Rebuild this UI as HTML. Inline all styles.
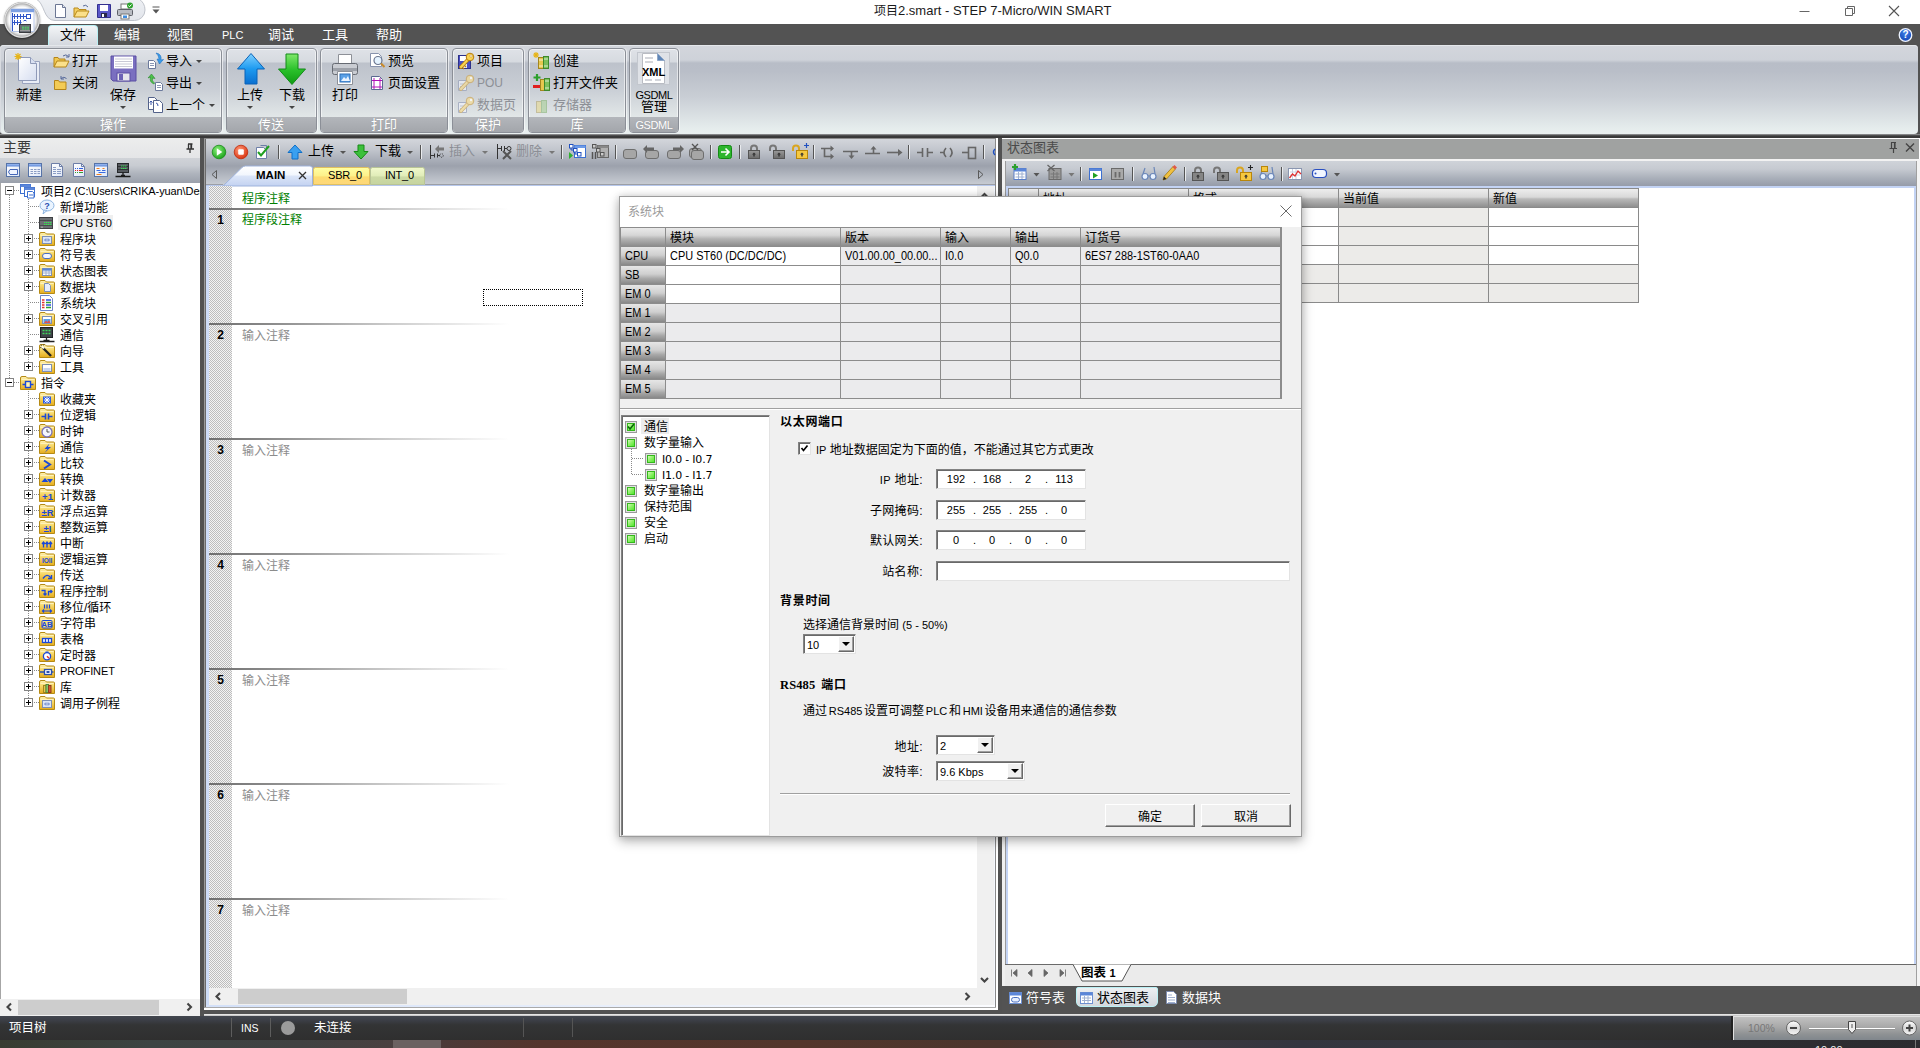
<!DOCTYPE html>
<html lang="zh-CN">
<head>
<meta charset="utf-8">
<title>项目2.smart - STEP 7-Micro/WIN SMART</title>
<style>
*{box-sizing:border-box;margin:0;padding:0}
html,body{width:1920px;height:1048px;overflow:hidden}
body{position:relative;background:#525252;font-family:"Liberation Sans","Noto Sans CJK SC",sans-serif;font-size:12px;color:#000}
.a{position:absolute}
.t{position:absolute;white-space:nowrap;line-height:1}
svg{position:absolute;overflow:visible}
.yh{font-family:"Liberation Sans","Noto Sans CJK SC",sans-serif}
</style>
</head>
<body>
<!-- ===== title bar ===== -->
<div class="a" id="titlebar" style="left:0;top:0;width:1920px;height:24px;background:#fff"></div>
<div class="t" style="left:874px;top:4px;font-size:13px;color:#1a1a1a"><span style="font-size:12px">项目</span>2.smart - STEP 7-Micro/WIN SMART</div>
<svg style="left:1790px;top:0" width="130" height="24" viewBox="0 0 130 24">
 <path d="M9.5 11.5h10" stroke="#666" stroke-width="1" fill="none"/>
 <path d="M55.5 8.5h7v7h-7zM57.5 8.5v-2h7v7h-2" stroke="#666" stroke-width="1" fill="none"/>
 <path d="M99 6l10 10M109 6l-10 10" stroke="#555" stroke-width="1.1" fill="none"/>
</svg>
<!-- ===== menu bar ===== -->
<div class="a" id="menubar" style="left:0;top:24px;width:1920px;height:21px;background:#535353"></div>
<!-- quick access -->
<svg style="left:0;top:0" width="150" height="24" viewBox="0 0 150 24"><defs><linearGradient id="qa" x1="0" y1="0" x2="0" y2="1"><stop offset="0" stop-color="#eef0f4"/><stop offset="1" stop-color="#e2e5eb"/></linearGradient></defs><path d="M36 -1C45 3 43 20.500 55 20.500H134.500A10.500 10.500 0 0 0 145 10Q145 3 139 -1z" fill="url(#qa)" stroke="#bfc3cb"/></svg>
<svg style="left:52px;top:2px" width="100" height="20" viewBox="0 0 100 20">
 <!-- new doc -->
 <path d="M3.5 2.5h7l3 3v10h-10z" fill="#fdfdff" stroke="#6b7693"/><path d="M10.500 2.500v3h3" fill="#dfe4f2" stroke="#6b7693"/>
 <!-- open folder -->
 <path d="M22 15V6h4l1 1.500h7V9" fill="#f3cf62" stroke="#b98a1b"/><path d="M22 15l3-6h12l-3 6z" fill="#fbe08a" stroke="#b98a1b"/><path d="M31 4q3-2 5 1" fill="none" stroke="#5a6d9a"/>
 <!-- save -->
 <path d="M45.500 2.500h13v13h-13z" fill="#5b58c9" stroke="#33308f"/><rect x="48" y="3" width="8" height="6" fill="#fff"/><rect x="49" y="11" width="6" height="4" fill="#2a2a4a"/><rect x="50" y="12" width="2" height="3" fill="#fff"/>
 <!-- print -->
 <rect x="69" y="2" width="8" height="5" fill="#fff" stroke="#777"/><rect x="65.500" y="7.500" width="15" height="6" rx="1" fill="#b9bcc3" stroke="#5d6068"/><rect x="69" y="12" width="8" height="5" fill="#fff" stroke="#777"/><rect x="71" y="13.500" width="4" height="2.500" fill="#3f8de0"/><circle cx="78" cy="3.500" r="3" fill="#2da32d"/><path d="M76.500 3.500l1 1.200 2-2.200" stroke="#fff" fill="none"/>
</svg>
<svg style="left:151px;top:6px" width="12" height="10" viewBox="0 0 12 10"><path d="M1.500 1h7" stroke="#555"/><path d="M1.500 3.500h7l-3.500 4z" fill="#555"/></svg>
<!-- app button -->
<div class="a" style="left:4px;top:2px;width:36px;height:36px;border-radius:50%;background:radial-gradient(circle closest-side at 50% 50%,#ffffff 0%,#fbfbfb 72%,#dadada 82%,#b2b2b2 90%,#e6e6e6 96%,#a6a6a6 100%);box-shadow:0 1px 2px rgba(0,0,0,.5)"></div>
<svg style="left:10px;top:8px" width="25" height="26" viewBox="0 0 25 26">
 <rect x="1" y="1" width="23" height="22.500" fill="#fdfdff" stroke="#b7c6e6" stroke-width="1"/><rect x="1" y="1" width="23" height="3.200" fill="#7c9fe2"/>
 <path d="M2.500 5v18M2.500 8.500h14M4.500 6v5M7.500 6v5M10.500 6v5M13.500 6v5M2.500 14.500h9M4.500 12v5M7.500 12v5M10.500 12v5M13.500 13q1.500-1.500 3 0" stroke="#2f55c8" fill="none" stroke-width="1"/><rect x="16.500" y="6.500" width="4" height="4" fill="none" stroke="#2f55c8"/>
 <rect x="9.500" y="16.500" width="11" height="8" fill="#6a6e74" stroke="#3a3c40"/><rect x="10" y="22" width="10" height="1" fill="#999"/><path d="M12 19.200h7M12 21h7" stroke="#4fe068" stroke-width="1" stroke-dasharray="2 .6"/>
</svg>
<!-- tabs -->
<div class="a" style="left:48px;top:25px;width:50px;height:20px;border:1px solid #b9f0f4;border-bottom:none;border-radius:4px 4px 0 0;background:linear-gradient(#f3f5f7,#d4d8de)"></div>
<div class="t" style="left:60px;top:28px;font-size:13px;color:#000">文件</div>
<div class="t" style="left:114px;top:28px;font-size:13px;color:#fff">编辑</div>
<div class="t" style="left:167px;top:28px;font-size:13px;color:#fff">视图</div>
<div class="t" style="left:222px;top:30px;font-size:11px;color:#fff">PLC</div>
<div class="t" style="left:268px;top:28px;font-size:13px;color:#fff">调试</div>
<div class="t" style="left:322px;top:28px;font-size:13px;color:#fff">工具</div>
<div class="t" style="left:376px;top:28px;font-size:13px;color:#fff">帮助</div>
<svg style="left:1898px;top:27px" width="15" height="15" viewBox="0 0 15 15"><defs><radialGradient id="hb" cx=".5" cy=".3" r=".8"><stop offset="0" stop-color="#3f7fe8"/><stop offset="1" stop-color="#0e3fb0"/></radialGradient></defs><circle cx="7.500" cy="8" r="6.300" fill="url(#hb)" stroke="#eef3fd" stroke-width="1.300"/><text x="7.500" y="11.200" font-size="10" font-weight="bold" text-anchor="middle" fill="#fff" font-family="Liberation Sans,sans-serif">?</text></svg>
<!-- ===== ribbon ===== -->
<div class="a" id="ribbon" style="left:0;top:45px;width:1918px;height:89px;border-radius:4px 4px 4px 4px;background:linear-gradient(#d3d6dc 0,#ced2d9 15px,#b8bdc7 18px,#b9bec8 26px,#c9ced5 52px,#e6eded 84px,#e9efef 100%);box-shadow:inset 0 1px 0 #e4e7eb, inset 1px 0 0 #d9dce1"></div>
<style>
.grp{position:absolute;top:48px;height:85px;border:1px solid #8b8f97;border-radius:4px;background:linear-gradient(#dfe2e7 0,#d6dae0 13px,#bdc2cb 14px,#c9ced5 40px,#e1e6e7 67px,#e3e8e8 100%);box-shadow:inset 0 0 0 1px rgba(255,255,255,.55),1px 0 0 rgba(255,255,255,.6)}
.grp i{position:absolute;left:0;right:0;bottom:0;height:15px;background:linear-gradient(#b3b6bb,#a3a6ab);border-radius:0 0 3px 3px}
.gl{position:absolute;top:118px;font-size:13px;color:#fff;text-align:center;white-space:nowrap;line-height:1;text-shadow:0 0 1px rgba(120,120,120,.5)}
.rt{position:absolute;white-space:nowrap;line-height:1;font-size:13px;color:#000}
.rt.dis{color:#8d9096}
.dd{position:absolute;width:0;height:0;border-left:3px solid transparent;border-right:3px solid transparent;border-top:3px solid #444}
</style>
<div class="grp" style="left:4px;width:218px"><i></i></div>
<div class="grp" style="left:226px;width:91px"><i></i></div>
<div class="grp" style="left:320px;width:128px"><i></i></div>
<div class="grp" style="left:452px;width:72px"><i></i></div>
<div class="grp" style="left:528px;width:98px"><i></i></div>
<div class="grp" style="left:629px;width:50px"><i></i></div>
<div class="gl" style="left:4px;width:218px">操作</div>
<div class="gl" style="left:226px;width:90px">传送</div>
<div class="gl" style="left:320px;width:128px">打印</div>
<div class="gl" style="left:452px;width:72px">保护</div>
<div class="gl" style="left:528px;width:98px">库</div>
<div class="gl" style="left:629px;width:50px;font-size:11px;top:120px;letter-spacing:-.4px">GSDML</div>
<!-- group 1 -->
<svg style="left:15px;top:53px" width="28" height="32" viewBox="0 0 28 32">
 <defs><linearGradient id="nd" x1="0" y1="0" x2="1" y2="1"><stop offset="0" stop-color="#ffffff"/><stop offset="1" stop-color="#d5ddf0"/></linearGradient></defs><path d="M7.500 8.500h17v22h-17z" fill="#e8ecf6" stroke="#9aa4bf"/>
 <path d="M3.500 4.500h12l6 6v17h-18z" fill="url(#nd)" stroke="#8f9ab8"/><path d="M15.500 4.500v6h6" fill="#d9e0f1" stroke="#8f9ab8"/>
 <path d="M3 0v7M-.5 3.500h7M.5 1l5 5M5.500 1l-5 5" stroke="#e7b416" stroke-width="1.200"/>
</svg>
<div class="rt" style="left:16px;top:88px">新建</div>
<svg style="left:53px;top:53px" width="17" height="16" viewBox="0 0 17 16"><path d="M1 14V4.500h4l1 1.500h6V8" fill="#f0c850" stroke="#b58418"/><path d="M1 14l3-6h12l-3 6z" fill="#fbe08a" stroke="#b58418"/><path d="M10 3q3-2.500 5.500.5" fill="none" stroke="#56699a"/><path d="M16 1v3h-3" fill="none" stroke="#56699a"/></svg>
<div class="rt" style="left:72px;top:54px">打开</div>
<svg style="left:53px;top:75px" width="17" height="16" viewBox="0 0 17 16"><path d="M1.500 14.500v-9h4l1 1.500h6.500v7.500z" fill="#f3cb55" stroke="#b58418"/><path d="M8 3.500q3-2.500 5.500 0" fill="none" stroke="#56699a"/><path d="M8 1v3h3" fill="none" stroke="#56699a"/></svg>
<div class="rt" style="left:72px;top:76px">关闭</div>
<svg style="left:110px;top:55px" width="27" height="28" viewBox="0 0 27 28">
 <path d="M1 1h25v25H3l-2-2z" fill="#7a6fc0" stroke="#5b4fa3"/><rect x="4" y="1.500" width="19" height="12" fill="#fff"/><path d="M5 4h17M5 6.500h17M5 9h17M5 11.500h17" stroke="#c9c9d6" stroke-width="1"/><rect x="7" y="18" width="13" height="8" fill="#e6e6ec" stroke="#5b4fa3"/><rect x="9" y="19" width="4" height="6" fill="#6c62b5"/>
</svg>
<div class="rt" style="left:110px;top:88px">保存</div><div class="dd" style="left:120px;top:106px"></div>
<svg style="left:147px;top:52px" width="18" height="18" viewBox="0 0 18 18"><path d="M1.500 8.500h5l2 2v6h-7z" fill="#fff" stroke="#6c7a9c"/><path d="M3 11.500h4M3 13.500h4" stroke="#8b97b3"/><path d="M9 1q6 1 5 7l2.500-.5-4 4.500-2.500-5 2 .5q0-4-3-6.500z" fill="#3a9be8" stroke="#1e6fc0" stroke-width=".6"/></svg>
<div class="rt" style="left:166px;top:54px">导入</div><div class="dd" style="left:196px;top:60px"></div>
<svg style="left:147px;top:74px" width="18" height="18" viewBox="0 0 18 18"><path d="M8.500 8.500h5l2 2v6h-7z" fill="#fff" stroke="#6c7a9c"/><path d="M10 11.500h4M10 13.500h4" stroke="#8b97b3"/><path d="M7 10q-5-2-3.500-7L1 4l3.500-4L8 4.500 5.500 4q-1 3 2 5z" fill="#4cc24c" stroke="#2a8a2a" stroke-width=".6"/></svg>
<div class="rt" style="left:166px;top:76px">导出</div><div class="dd" style="left:196px;top:82px"></div>
<svg style="left:147px;top:96px" width="18" height="18" viewBox="0 0 18 18"><path d="M1.500 1.500h6l3 3v9h-9z" fill="#fff" stroke="#53628a"/><path d="M6.500 4.500h6l3 3v9h-9z" fill="#fff" stroke="#53628a"/><path d="M4 9V5M2.500 6.500L4 5l1.500 1.500M9 7q2 0 2 3" stroke="#3b57a8" fill="none"/></svg>
<div class="rt" style="left:166px;top:98px">上一个</div><div class="dd" style="left:209px;top:104px"></div>
<!-- group 2 -->
<svg style="left:236px;top:52px" width="30" height="34" viewBox="0 0 30 34"><defs><linearGradient id="gu" x1="0" y1="0" x2="0" y2="1"><stop offset="0" stop-color="#7fd0ff"/><stop offset=".5" stop-color="#1e9bf0"/><stop offset="1" stop-color="#0a6fd0"/></linearGradient><linearGradient id="gd" x1="0" y1="0" x2="0" y2="1"><stop offset="0" stop-color="#7fe86a"/><stop offset=".5" stop-color="#2cc22c"/><stop offset="1" stop-color="#0e9a12"/></linearGradient></defs>
 <path d="M15 1.500L28.500 17H21v15H9V17H1.500z" fill="url(#gu)" stroke="#0b63b8" stroke-width="1"/></svg>
<div class="rt" style="left:237px;top:88px">上传</div><div class="dd" style="left:247px;top:106px"></div>
<svg style="left:277px;top:52px" width="30" height="34" viewBox="0 0 30 34"><path d="M15 32.500L28.500 17H21V2H9v15H1.500z" fill="url(#gd)" stroke="#128a18" stroke-width="1"/></svg>
<div class="rt" style="left:279px;top:88px">下载</div><div class="dd" style="left:289px;top:106px"></div>
<!-- group 3 -->
<svg style="left:331px;top:53px" width="28" height="33" viewBox="0 0 28 33">
 <path d="M7.500 1.500h13v10h-13z" fill="#fff" stroke="#8d9097"/><rect x="1.500" y="10.500" width="25" height="11" rx="2" fill="#c9ccd2" stroke="#666a72"/><rect x="2" y="15" width="24" height="3" fill="#9da1a9"/><path d="M6.500 18.500h15v13h-15z" fill="#fff" stroke="#8d9097"/><rect x="9" y="21" width="10" height="8" fill="#5aa0e6" stroke="#2f6fb8"/><path d="M10 28l3-4 2 2 2-3 2 5z" fill="#eaf3ff"/>
</svg>
<div class="rt" style="left:332px;top:88px">打印</div>
<svg style="left:369px;top:52px" width="17" height="17" viewBox="0 0 17 17"><path d="M1.500 1.500h8l3 3v10h-11z" fill="#fff" stroke="#8893ad"/><circle cx="9" cy="8.500" r="4" fill="#dff0ff" fill-opacity=".8" stroke="#6b7690" stroke-width="1.200"/><path d="M12 11.500l3.500 3.500" stroke="#c98a2a" stroke-width="2"/></svg>
<div class="rt" style="left:388px;top:54px">预览</div>
<svg style="left:369px;top:74px" width="17" height="17" viewBox="0 0 17 17"><path d="M2.500 2.500h8l3 3v10h-11z" fill="#fff" stroke="#5a6890"/><path d="M5 4v11M11 4v11M3 6.500h10M3 13h10" stroke="#b010b8" stroke-width="1"/></svg>
<div class="rt" style="left:388px;top:76px">页面设置</div>
<!-- group 4 keys -->
<svg style="left:457px;top:52px" width="18" height="18" viewBox="0 0 18 18"><rect x="1.500" y="3.500" width="12" height="13" fill="#4a4fc0" stroke="#2d318a"/><rect x="3" y="4" width="6" height="5" fill="#fff"/><rect x="4" y="12" width="6" height="4" fill="#e8e8f0"/><path d="M4 15l7.500-8" stroke="#b97f10" stroke-width="3.800" stroke-linecap="round"/><path d="M4 15l7.500-8" stroke="#f8d352" stroke-width="2.200" stroke-linecap="round"/><path d="M5.500 15.500l1.500 1.500M7.500 13.500l1.500 1.500" stroke="#b97f10" stroke-width="1.300"/><circle cx="13" cy="5" r="3.800" fill="#f8d352" stroke="#b97f10"/><circle cx="14" cy="4" r="1.200" fill="#fff" stroke="#b97f10" stroke-width=".5"/></svg>
<div class="rt" style="left:477px;top:54px">项目</div>
<svg style="left:457px;top:74px" width="18" height="18" viewBox="0 0 18 18" opacity=".75"><path d="M1.500 6.500h8v10h-8z" fill="#eef1f7" stroke="#9aa3bb"/><path d="M3 10h5M3 12.500h5" stroke="#b5bccd"/><path d="M4 15l7.500-8" stroke="#c9a45a" stroke-width="3.800" stroke-linecap="round"/><path d="M4 15l7.500-8" stroke="#f3dc98" stroke-width="2.200" stroke-linecap="round"/><circle cx="13" cy="5" r="3.800" fill="#f3dc98" stroke="#c9a45a"/><circle cx="14" cy="4" r="1.200" fill="#fff"/></svg>
<div class="rt dis" style="left:477px;top:77px;font-size:12px">POU</div>
<svg style="left:457px;top:96px" width="18" height="18" viewBox="0 0 18 18" opacity=".75"><path d="M1.500 6.500h8v10h-8z" fill="#eef1f7" stroke="#9aa3bb"/><path d="M3 10h5M3 12.500h5" stroke="#b5bccd"/><path d="M4 15l7.500-8" stroke="#c9a45a" stroke-width="3.800" stroke-linecap="round"/><path d="M4 15l7.500-8" stroke="#f3dc98" stroke-width="2.200" stroke-linecap="round"/><circle cx="13" cy="5" r="3.800" fill="#f3dc98" stroke="#c9a45a"/><circle cx="14" cy="4" r="1.200" fill="#fff"/></svg>
<div class="rt dis" style="left:477px;top:98px">数据页</div>
<!-- group 5 library -->
<svg style="left:533px;top:52px" width="18" height="18" viewBox="0 0 18 18"><path d="M3 0v6M0 3h6M1 1l4 4M5 1L1 5" stroke="#e7b416" stroke-width="1.100"/><rect x="5.500" y="5.500" width="5" height="11" fill="#e6c84e" stroke="#a3861e"/><rect x="10.500" y="4.500" width="5" height="12" fill="#7cc05c" stroke="#3f8a2c"/><path d="M6 8h4M6 14h4M11 7h4M11 14h4" stroke="#fff" stroke-opacity=".7"/></svg>
<div class="rt" style="left:553px;top:54px">创建</div>
<svg style="left:533px;top:74px" width="18" height="18" viewBox="0 0 18 18"><path d="M4 0v7M.5 3.500h7" stroke="#2ca02c" stroke-width="2.200"/><rect x="0" y="11" width="8" height="3" fill="#e02020"/><rect x="7.500" y="5.500" width="4" height="11" fill="#e6c84e" stroke="#a3861e"/><rect x="11.500" y="4.500" width="5" height="12" fill="#7cc05c" stroke="#3f8a2c"/><path d="M12 7h4M12 14h4" stroke="#fff" stroke-opacity=".7"/></svg>
<div class="rt" style="left:553px;top:76px">打开文件夹</div>
<svg style="left:533px;top:96px" width="18" height="18" viewBox="0 0 18 18" opacity=".6"><rect x="3.500" y="5.500" width="5" height="11" fill="#e6d88e" stroke="#b3a66e"/><rect x="8.500" y="4.500" width="5" height="12" fill="#a9cf97" stroke="#86b374"/></svg>
<div class="rt dis" style="left:553px;top:98px">存储器</div>
<!-- group 6 -->
<svg style="left:637px;top:52px" width="34" height="34" viewBox="0 0 34 34"><rect x=".5" y=".5" width="32" height="32" fill="#dfe2e7" stroke="#c3c7ce"/><path d="M5.500 1.500h15l7 7v23h-22z" fill="#fff" stroke="#b9bcc3"/><path d="M20.500 1.500v7h7z" fill="#5f86b8" stroke="#8ea7c8"/><path d="M8 6h8M8 10h8M8 28h7M18 28h6" stroke="#c6c9cf" stroke-width="1.300"/><text x="16.500" y="24" font-size="11" font-weight="bold" text-anchor="middle" font-family="Liberation Sans,sans-serif" fill="#000">XML</text></svg>
<div class="rt" style="left:629px;width:50px;text-align:center;top:90px;font-size:11px;letter-spacing:-.4px">GSDML</div>
<div class="rt" style="left:629px;width:50px;text-align:center;top:100px">管理</div>
<!-- below ribbon dark band -->
<div class="a" style="left:0;top:134px;width:1920px;height:4px;background:linear-gradient(#9a9c9f 0,#6a6a6a 28%,#3a3a3a 45%,#383838 100%)"></div>
<!-- ===== left panel ===== -->
<svg width="0" height="0" style="left:0;top:0"><defs><linearGradient id="fgr" x1="0" y1="0" x2="0" y2="1"><stop offset="0" stop-color="#fdf0b4"/><stop offset=".35" stop-color="#f8dc72"/><stop offset="1" stop-color="#e6ac1c"/></linearGradient></defs></svg>
<div class="a" style="left:0;top:138px;width:200px;height:878px;background:#fff"></div>
<div class="a" style="left:0;top:138px;width:200px;height:20px;background:linear-gradient(#eceded,#e4e5e7)"></div>
<div class="t" style="left:3px;top:140px;font-size:14px;color:#3a3a3a">主要</div>
<svg style="left:186px;top:143px" width="8" height="10" viewBox="0 0 8 10"><path d="M2 1h4.500M2.500 1v5M5.500 1v5M5 1v5M.5 6h7.500M4 6v4" stroke="#333" stroke-width="1.300" fill="none"/></svg>
<div class="a" style="left:0;top:158px;width:200px;height:25px;background:linear-gradient(#d0d3d8 0,#c8ccd2 30%,#afb4bd 62%,#9aa0ab 100%)"></div>
<svg style="left:5px;top:162px" width="130" height="17" viewBox="0 0 130 17">
<defs><linearGradient id="tb" x1="0" y1="0" x2="0" y2="1"><stop offset="0" stop-color="#9dbcf2"/><stop offset="1" stop-color="#5b86d8"/></linearGradient><linearGradient id="wb" x1="0" y1="0" x2="1" y2="1"><stop offset="0" stop-color="#ffffff"/><stop offset="1" stop-color="#dfe7f6"/></linearGradient></defs>
<g><rect x="1.500" y="1.500" width="13" height="13" fill="url(#wb)" stroke="#5673a8"/><rect x="2" y="2" width="12" height="2.500" fill="url(#tb)"/><path d="M5 7.500h7.500v5H5L3.500 10z" fill="#eef3ff" stroke="#4466b8"/></g>
<g transform="translate(22,0)"><rect x="1.500" y="1.500" width="13" height="13" fill="url(#wb)" stroke="#5673a8"/><rect x="2" y="2" width="12" height="2.500" fill="url(#tb)"/><path d="M3.500 7.500h2.500M7 7.500h2.500M10.500 7.500H13M3.500 9.500h2.500M7 9.500h2.500M10.500 9.500H13M3.500 11.500h2.500M7 11.500h2.500M10.500 11.500H13" stroke="#8a9cc4"/></g>
<g transform="translate(44,0)"><path d="M2.500 1.500h8l3 3v10h-11z" fill="url(#wb)" stroke="#6d7ea8"/><path d="M10.500 1.500v3h3" fill="none" stroke="#6d7ea8"/><path d="M4 5.500h3M4 7.500h3M8 7.500h4M4 9.500h3M8 9.500h4M4 11.500h3M8 11.500h4" stroke="#8a9cc4"/></g>
<g transform="translate(66,0)"><path d="M2.500 1.500h8l3 3v10h-11z" fill="url(#wb)" stroke="#6d7ea8"/><path d="M10.500 1.500v3h3" fill="none" stroke="#6d7ea8"/><path d="M4 6.500h1M6 6.500h1" stroke="#3060e0"/><path d="M8 6.500h4" stroke="#3060e0"/><path d="M4 8.500h1M6 8.500h1M8 8.500h4" stroke="#e02020"/><path d="M4 10.500h1M6 10.500h1M8 10.500h4" stroke="#30a030"/></g>
<g transform="translate(88,0)"><rect x="1.500" y="1.500" width="13" height="13" fill="url(#wb)" stroke="#5673a8"/><rect x="2" y="2" width="12" height="2.500" fill="url(#tb)"/><path d="M3.500 6.500h3M9.500 6.500h2M3.500 12.500h5" stroke="#f08020"/><path d="M3.500 8.500h4M9 8.500h3.500M5.500 10.500h7" stroke="#3c6ce0"/></g>
<g transform="translate(110,0)"><rect x="2.500" y="1.500" width="11" height="9" fill="#55595e" stroke="#26282b"/><path d="M3 4.500h10M3 7.500h10" stroke="#2e3033"/><path d="M6 4h6M6 6.500h6" stroke="#3fd85a" stroke-width="1" stroke-dasharray="1.500 .5"/><path d="M8 10.500v3M.5 14.500h15M6 13.500h4" stroke="#1a1a1a" stroke-width="1.300"/></g>
</svg>
<style>.nl{font-size:11px;letter-spacing:-.1px;position:relative;top:-1px}</style>
<div class="a" style="left:0;top:183px;width:1px;height:816px;background:#a6a6a6"></div>
<div class="a" id="tree" style="left:0;top:183px;width:200px;height:814px;overflow:hidden;font-size:12px">
<div class="a" style="left:9px;top:12px;width:1px;height:188px;background-image:linear-gradient(#8a8a8a 50%,transparent 50%);background-size:1px 2px"></div>
<div class="a" style="left:28px;top:14px;width:1px;height:170px;background-image:linear-gradient(#8a8a8a 50%,transparent 50%);background-size:1px 2px"></div>
<div class="a" style="left:28px;top:206px;width:1px;height:314px;background-image:linear-gradient(#8a8a8a 50%,transparent 50%);background-size:1px 2px"></div>
<div class="a" style="left:14px;top:7px;width:6px;height:1px;background-image:linear-gradient(90deg,#8a8a8a 50%,transparent 50%);background-size:2px 1px"></div>
<svg style="left:5px;top:3px" width="9" height="9" viewBox="0 0 9 9"><rect x=".5" y=".5" width="8" height="8" fill="#fff" stroke="#848484"/><path d="M2 4h5" stroke="#000" transform="translate(0,.5)"/></svg>
<svg style="left:20px;top:0px" width="16" height="16" viewBox="0 0 16 16"><rect x=".5" y="1.500" width="10" height="9" fill="#fff" stroke="#3c6fd0"/><rect x=".5" y="1.500" width="10" height="2.500" fill="#5b86d8"/><rect x="4.500" y="4.500" width="10" height="9" fill="#fff" stroke="#3c6fd0"/><rect x="4.500" y="4.500" width="10" height="2.500" fill="#5b86d8"/><path d="M7.500 8.500h5l1.500 1.500v5h-6.500z" fill="#fff" stroke="#3c6fd0"/><path d="M9 12h4" stroke="#3c6fd0"/></svg>
<div class="t" style="left:41px;top:3px;font-size:12px">项目<span class="nl">2 (C:\Users\CRIKA-yuan\Des</span></div>
<div class="a" style="left:30px;top:23px;width:9px;height:1px;background-image:linear-gradient(90deg,#8a8a8a 50%,transparent 50%);background-size:2px 1px"></div>
<svg style="left:39px;top:16px" width="16" height="16" viewBox="0 0 16 16"><ellipse cx="8" cy="6.500" rx="7" ry="5.500" fill="#eaf4ff" stroke="#8fb5e0"/><path d="M5 11l-1 4 4-3.500z" fill="#eaf4ff" stroke="#8fb5e0"/><text x="8" y="10" font-size="9" font-weight="bold" text-anchor="middle" fill="#2a4fb0" font-family="Liberation Sans,sans-serif">?</text></svg>
<div class="t" style="left:60px;top:19px;font-size:12px">新增功能</div>
<div class="a" style="left:30px;top:39px;width:9px;height:1px;background-image:linear-gradient(90deg,#8a8a8a 50%,transparent 50%);background-size:2px 1px"></div>
<svg style="left:39px;top:32px" width="16" height="16" viewBox="0 0 16 16"><rect x=".5" y="2.500" width="13" height="11" fill="#6b6e72" stroke="#3e4043"/><path d="M1 5.500h12M1 10.500h12" stroke="#4a4c4f"/><rect x="2" y="11.500" width="2" height="1.500" fill="#999"/><path d="M5 7.500h8" stroke="#35e850" stroke-width="1" stroke-dasharray="1.400 .6"/><path d="M5 9.500h8" stroke="#35e850" stroke-width="1" stroke-dasharray="1.400 .6"/></svg>
<div class="a" style="left:58px;top:32px;width:55px;height:15px;background:#efefef"></div>
<div class="t" style="left:60px;top:35px;font-size:12px"><span class="nl">CPU ST60</span></div>
<div class="a" style="left:34px;top:55px;width:5px;height:1px;background-image:linear-gradient(90deg,#8a8a8a 50%,transparent 50%);background-size:2px 1px"></div>
<svg style="left:24px;top:51px" width="9" height="9" viewBox="0 0 9 9"><rect x=".5" y=".5" width="8" height="8" fill="#fff" stroke="#848484"/><path d="M2 4h5M4.500 1.500v5" stroke="#000" transform="translate(0,.5)"/></svg>
<svg style="left:39px;top:48px" width="16" height="16" viewBox="0 0 16 16"><path d="M.5 14.500V3q0-1.500 1.500-1.500h4l1.500 1.500h7q1 0 1 1v10.500z" fill="url(#fgr)" stroke="#b58a14"/><path d="M1.500 4.500h13" stroke="#fff3c0" stroke-opacity=".9"/><rect x="3.500" y="5.500" width="9" height="7" fill="#dbe5f7" stroke="#7d8fb5"/><path d="M5 9h2M9 9h2M7 7.500v3M9 7.500v3" stroke="#6d86c8"/></svg>
<div class="t" style="left:60px;top:51px;font-size:12px">程序块</div>
<div class="a" style="left:34px;top:71px;width:5px;height:1px;background-image:linear-gradient(90deg,#8a8a8a 50%,transparent 50%);background-size:2px 1px"></div>
<svg style="left:24px;top:67px" width="9" height="9" viewBox="0 0 9 9"><rect x=".5" y=".5" width="8" height="8" fill="#fff" stroke="#848484"/><path d="M2 4h5M4.500 1.500v5" stroke="#000" transform="translate(0,.5)"/></svg>
<svg style="left:39px;top:64px" width="16" height="16" viewBox="0 0 16 16"><path d="M.5 14.500V3q0-1.500 1.500-1.500h4l1.500 1.500h7q1 0 1 1v10.500z" fill="url(#fgr)" stroke="#b58a14"/><path d="M1.500 4.500h13" stroke="#fff3c0" stroke-opacity=".9"/><rect x="3.500" y="6.500" width="9" height="5" rx="2.500" fill="#f2f6ff" stroke="#4a6fc0"/></svg>
<div class="t" style="left:60px;top:67px;font-size:12px">符号表</div>
<div class="a" style="left:34px;top:87px;width:5px;height:1px;background-image:linear-gradient(90deg,#8a8a8a 50%,transparent 50%);background-size:2px 1px"></div>
<svg style="left:24px;top:83px" width="9" height="9" viewBox="0 0 9 9"><rect x=".5" y=".5" width="8" height="8" fill="#fff" stroke="#848484"/><path d="M2 4h5M4.500 1.500v5" stroke="#000" transform="translate(0,.5)"/></svg>
<svg style="left:39px;top:80px" width="16" height="16" viewBox="0 0 16 16"><path d="M.5 14.500V3q0-1.500 1.500-1.500h4l1.500 1.500h7q1 0 1 1v10.500z" fill="url(#fgr)" stroke="#b58a14"/><path d="M1.500 4.500h13" stroke="#fff3c0" stroke-opacity=".9"/><rect x="3.500" y="5.500" width="9" height="7" fill="#fff" stroke="#7d8fb5"/><path d="M4 8h8M4 10h8M7 7v5M10 7v5" stroke="#9fb0d0"/><rect x="3.500" y="5.500" width="9" height="2" fill="#5b86d8"/></svg>
<div class="t" style="left:60px;top:83px;font-size:12px">状态图表</div>
<div class="a" style="left:34px;top:103px;width:5px;height:1px;background-image:linear-gradient(90deg,#8a8a8a 50%,transparent 50%);background-size:2px 1px"></div>
<svg style="left:24px;top:99px" width="9" height="9" viewBox="0 0 9 9"><rect x=".5" y=".5" width="8" height="8" fill="#fff" stroke="#848484"/><path d="M2 4h5M4.500 1.500v5" stroke="#000" transform="translate(0,.5)"/></svg>
<svg style="left:39px;top:96px" width="16" height="16" viewBox="0 0 16 16"><path d="M.5 14.500V3q0-1.500 1.500-1.500h4l1.500 1.500h7q1 0 1 1v10.500z" fill="url(#fgr)" stroke="#b58a14"/><path d="M1.500 4.500h13" stroke="#fff3c0" stroke-opacity=".9"/><path d="M5.500 4.500h4l2 2v6h-6z" fill="#e8eefc" stroke="#7d8fb5"/></svg>
<div class="t" style="left:60px;top:99px;font-size:12px">数据块</div>
<div class="a" style="left:30px;top:119px;width:9px;height:1px;background-image:linear-gradient(90deg,#8a8a8a 50%,transparent 50%);background-size:2px 1px"></div>
<svg style="left:39px;top:112px" width="16" height="16" viewBox="0 0 16 16"><path d="M1.500 .5h9l3 3v12h-12z" fill="#fff" stroke="#6d86c8"/><path d="M3 5h2.500M3 7.500h2.500M3 10h2.500M3 12.500h2.500" stroke="#e03030" stroke-width="1.400"/><path d="M7 5h5M7 10h5" stroke="#3050e0" stroke-width="1.400"/><path d="M7 7.500h5M7 12.500h5" stroke="#30a030" stroke-width="1.400"/></svg>
<div class="t" style="left:60px;top:115px;font-size:12px">系统块</div>
<div class="a" style="left:34px;top:135px;width:5px;height:1px;background-image:linear-gradient(90deg,#8a8a8a 50%,transparent 50%);background-size:2px 1px"></div>
<svg style="left:24px;top:131px" width="9" height="9" viewBox="0 0 9 9"><rect x=".5" y=".5" width="8" height="8" fill="#fff" stroke="#848484"/><path d="M2 4h5M4.500 1.500v5" stroke="#000" transform="translate(0,.5)"/></svg>
<svg style="left:39px;top:128px" width="16" height="16" viewBox="0 0 16 16"><path d="M.5 14.500V3q0-1.500 1.500-1.500h4l1.500 1.500h7q1 0 1 1v10.500z" fill="url(#fgr)" stroke="#b58a14"/><path d="M1.500 4.500h13" stroke="#fff3c0" stroke-opacity=".9"/><rect x="3.500" y="5.500" width="9" height="7" fill="#fff" stroke="#7d8fb5"/><rect x="4.500" y="8" width="7" height="4" fill="#5aa0e6"/><path d="M5 12l2-2.500 1.500 1.500 1.500-2 1.500 3z" fill="#e05050"/></svg>
<div class="t" style="left:60px;top:131px;font-size:12px">交叉引用</div>
<div class="a" style="left:30px;top:151px;width:9px;height:1px;background-image:linear-gradient(90deg,#8a8a8a 50%,transparent 50%);background-size:2px 1px"></div>
<svg style="left:39px;top:144px" width="16" height="16" viewBox="0 0 16 16"><rect x="1.500" y=".5" width="12" height="10" fill="#3f4348" stroke="#1f2123"/><path d="M3.500 3.500h8M3.500 6.500h8" stroke="#3fd85a" stroke-width="1.500" stroke-dasharray="2 1"/><path d="M7.500 10.500v3M.5 14.500h15M4.500 13.500h6" stroke="#222" stroke-width="1.300"/></svg>
<div class="t" style="left:60px;top:147px;font-size:12px">通信</div>
<div class="a" style="left:34px;top:167px;width:5px;height:1px;background-image:linear-gradient(90deg,#8a8a8a 50%,transparent 50%);background-size:2px 1px"></div>
<svg style="left:24px;top:163px" width="9" height="9" viewBox="0 0 9 9"><rect x=".5" y=".5" width="8" height="8" fill="#fff" stroke="#848484"/><path d="M2 4h5M4.500 1.500v5" stroke="#000" transform="translate(0,.5)"/></svg>
<svg style="left:39px;top:160px" width="16" height="16" viewBox="0 0 16 16"><path d="M.5 14.500V3q0-1.500 1.500-1.500h4l1.500 1.500h7q1 0 1 1v10.500z" fill="url(#fgr)" stroke="#b58a14"/><path d="M1.500 4.500h13" stroke="#fff3c0" stroke-opacity=".9"/><path d="M4 5l8 8" stroke="#222" stroke-width="2.400"/><path d="M3 3.500l2 2" stroke="#fff" stroke-width="1.600"/><path d="M2 1.500l.5 1.500M5 1l-.5 1.500M1 4.500l1.500.2" stroke="#333" stroke-width=".8"/></svg>
<div class="t" style="left:60px;top:163px;font-size:12px">向导</div>
<div class="a" style="left:34px;top:183px;width:5px;height:1px;background-image:linear-gradient(90deg,#8a8a8a 50%,transparent 50%);background-size:2px 1px"></div>
<svg style="left:24px;top:179px" width="9" height="9" viewBox="0 0 9 9"><rect x=".5" y=".5" width="8" height="8" fill="#fff" stroke="#848484"/><path d="M2 4h5M4.500 1.500v5" stroke="#000" transform="translate(0,.5)"/></svg>
<svg style="left:39px;top:176px" width="16" height="16" viewBox="0 0 16 16"><path d="M.5 14.500V3q0-1.500 1.500-1.500h4l1.500 1.500h7q1 0 1 1v10.500z" fill="url(#fgr)" stroke="#b58a14"/><path d="M1.500 4.500h13" stroke="#fff3c0" stroke-opacity=".9"/><rect x="3.500" y="5.500" width="9" height="7" fill="#fff" stroke="#7d8fb5"/><rect x="4.500" y="9" width="7" height="3" fill="#c9d6f0"/></svg>
<div class="t" style="left:60px;top:179px;font-size:12px">工具</div>
<div class="a" style="left:14px;top:199px;width:6px;height:1px;background-image:linear-gradient(90deg,#8a8a8a 50%,transparent 50%);background-size:2px 1px"></div>
<svg style="left:5px;top:195px" width="9" height="9" viewBox="0 0 9 9"><rect x=".5" y=".5" width="8" height="8" fill="#fff" stroke="#848484"/><path d="M2 4h5" stroke="#000" transform="translate(0,.5)"/></svg>
<svg style="left:20px;top:192px" width="16" height="16" viewBox="0 0 16 16"><path d="M.5 14.500V3q0-1.500 1.500-1.500h4l1.500 1.500h7q1 0 1 1v10.500z" fill="url(#fgr)" stroke="#b58a14"/><path d="M1.500 4.500h13" stroke="#fff3c0" stroke-opacity=".9"/><rect x="5.500" y="6.500" width="5" height="6" fill="#fff3b0" stroke="#1a48d8" stroke-width="1.400"/><path d="M2.500 9.500h3M10.500 9.500h3" stroke="#1a48d8" stroke-width="1.400"/></svg>
<div class="t" style="left:41px;top:195px;font-size:12px">指令</div>
<div class="a" style="left:30px;top:215px;width:9px;height:1px;background-image:linear-gradient(90deg,#8a8a8a 50%,transparent 50%);background-size:2px 1px"></div>
<svg style="left:39px;top:208px" width="16" height="16" viewBox="0 0 16 16"><path d="M.5 14.500V3q0-1.500 1.500-1.500h4l1.500 1.500h7q1 0 1 1v10.500z" fill="url(#fgr)" stroke="#b58a14"/><path d="M1.500 4.500h13" stroke="#fff3c0" stroke-opacity=".9"/><rect x="4" y="5.500" width="8" height="7" fill="#2a5ae8"/><path d="M8 6v6M5 9h6M5.500 6.500l5 5M10.500 6.500l-5 5" stroke="#fff" stroke-width="1"/></svg>
<div class="t" style="left:60px;top:211px;font-size:12px">收藏夹</div>
<div class="a" style="left:34px;top:231px;width:5px;height:1px;background-image:linear-gradient(90deg,#8a8a8a 50%,transparent 50%);background-size:2px 1px"></div>
<svg style="left:24px;top:227px" width="9" height="9" viewBox="0 0 9 9"><rect x=".5" y=".5" width="8" height="8" fill="#fff" stroke="#848484"/><path d="M2 4h5M4.500 1.500v5" stroke="#000" transform="translate(0,.5)"/></svg>
<svg style="left:39px;top:224px" width="16" height="16" viewBox="0 0 16 16"><path d="M.5 14.500V3q0-1.500 1.500-1.500h4l1.500 1.500h7q1 0 1 1v10.500z" fill="url(#fgr)" stroke="#b58a14"/><path d="M1.500 4.500h13" stroke="#fff3c0" stroke-opacity=".9"/><path d="M2.500 9.500h4M9.500 9.500h4M6.500 6.500v6M9.500 6.500v6" stroke="#1a48d8" stroke-width="1.600"/></svg>
<div class="t" style="left:60px;top:227px;font-size:12px">位逻辑</div>
<div class="a" style="left:34px;top:247px;width:5px;height:1px;background-image:linear-gradient(90deg,#8a8a8a 50%,transparent 50%);background-size:2px 1px"></div>
<svg style="left:24px;top:243px" width="9" height="9" viewBox="0 0 9 9"><rect x=".5" y=".5" width="8" height="8" fill="#fff" stroke="#848484"/><path d="M2 4h5M4.500 1.500v5" stroke="#000" transform="translate(0,.5)"/></svg>
<svg style="left:39px;top:240px" width="16" height="16" viewBox="0 0 16 16"><path d="M.5 14.500V3q0-1.500 1.500-1.500h4l1.500 1.500h7q1 0 1 1v10.500z" fill="url(#fgr)" stroke="#b58a14"/><path d="M1.500 4.500h13" stroke="#fff3c0" stroke-opacity=".9"/><circle cx="8" cy="9" r="5" fill="#f4f6ff" stroke="#7a72b8" stroke-width="1.300"/><path d="M8 6v3h2.500" stroke="#555" fill="none"/></svg>
<div class="t" style="left:60px;top:243px;font-size:12px">时钟</div>
<div class="a" style="left:34px;top:263px;width:5px;height:1px;background-image:linear-gradient(90deg,#8a8a8a 50%,transparent 50%);background-size:2px 1px"></div>
<svg style="left:24px;top:259px" width="9" height="9" viewBox="0 0 9 9"><rect x=".5" y=".5" width="8" height="8" fill="#fff" stroke="#848484"/><path d="M2 4h5M4.500 1.500v5" stroke="#000" transform="translate(0,.5)"/></svg>
<svg style="left:39px;top:256px" width="16" height="16" viewBox="0 0 16 16"><path d="M.5 14.500V3q0-1.500 1.500-1.500h4l1.500 1.500h7q1 0 1 1v10.500z" fill="url(#fgr)" stroke="#b58a14"/><path d="M1.500 4.500h13" stroke="#fff3c0" stroke-opacity=".9"/><path d="M10.500 4.500l-5 5.500h3l-3 4 6.500-6h-3.200z" fill="#1a48d8"/></svg>
<div class="t" style="left:60px;top:259px;font-size:12px">通信</div>
<div class="a" style="left:34px;top:279px;width:5px;height:1px;background-image:linear-gradient(90deg,#8a8a8a 50%,transparent 50%);background-size:2px 1px"></div>
<svg style="left:24px;top:275px" width="9" height="9" viewBox="0 0 9 9"><rect x=".5" y=".5" width="8" height="8" fill="#fff" stroke="#848484"/><path d="M2 4h5M4.500 1.500v5" stroke="#000" transform="translate(0,.5)"/></svg>
<svg style="left:39px;top:272px" width="16" height="16" viewBox="0 0 16 16"><path d="M.5 14.500V3q0-1.500 1.500-1.500h4l1.500 1.500h7q1 0 1 1v10.500z" fill="url(#fgr)" stroke="#b58a14"/><path d="M1.500 4.500h13" stroke="#fff3c0" stroke-opacity=".9"/><path d="M5 5.500l6 4-6 4" stroke="#1a48d8" stroke-width="2" fill="none"/></svg>
<div class="t" style="left:60px;top:275px;font-size:12px">比较</div>
<div class="a" style="left:34px;top:295px;width:5px;height:1px;background-image:linear-gradient(90deg,#8a8a8a 50%,transparent 50%);background-size:2px 1px"></div>
<svg style="left:24px;top:291px" width="9" height="9" viewBox="0 0 9 9"><rect x=".5" y=".5" width="8" height="8" fill="#fff" stroke="#848484"/><path d="M2 4h5M4.500 1.500v5" stroke="#000" transform="translate(0,.5)"/></svg>
<svg style="left:39px;top:288px" width="16" height="16" viewBox="0 0 16 16"><path d="M.5 14.500V3q0-1.500 1.500-1.500h4l1.500 1.500h7q1 0 1 1v10.500z" fill="url(#fgr)" stroke="#b58a14"/><path d="M1.500 4.500h13" stroke="#fff3c0" stroke-opacity=".9"/><path d="M2.500 11l3.500-4 3.500 4z" fill="#1a48d8"/><path d="M8 8h6l-3 4z" fill="#1a48d8"/></svg>
<div class="t" style="left:60px;top:291px;font-size:12px">转换</div>
<div class="a" style="left:34px;top:311px;width:5px;height:1px;background-image:linear-gradient(90deg,#8a8a8a 50%,transparent 50%);background-size:2px 1px"></div>
<svg style="left:24px;top:307px" width="9" height="9" viewBox="0 0 9 9"><rect x=".5" y=".5" width="8" height="8" fill="#fff" stroke="#848484"/><path d="M2 4h5M4.500 1.500v5" stroke="#000" transform="translate(0,.5)"/></svg>
<svg style="left:39px;top:304px" width="16" height="16" viewBox="0 0 16 16"><path d="M.5 14.500V3q0-1.500 1.500-1.500h4l1.500 1.500h7q1 0 1 1v10.500z" fill="url(#fgr)" stroke="#b58a14"/><path d="M1.500 4.500h13" stroke="#fff3c0" stroke-opacity=".9"/><text x="8.5" y="12.5" font-size="9.5" font-weight="bold" text-anchor="middle" fill="#1a48d8" font-family="Liberation Sans,sans-serif">+1</text></svg>
<div class="t" style="left:60px;top:307px;font-size:12px">计数器</div>
<div class="a" style="left:34px;top:327px;width:5px;height:1px;background-image:linear-gradient(90deg,#8a8a8a 50%,transparent 50%);background-size:2px 1px"></div>
<svg style="left:24px;top:323px" width="9" height="9" viewBox="0 0 9 9"><rect x=".5" y=".5" width="8" height="8" fill="#fff" stroke="#848484"/><path d="M2 4h5M4.500 1.500v5" stroke="#000" transform="translate(0,.5)"/></svg>
<svg style="left:39px;top:320px" width="16" height="16" viewBox="0 0 16 16"><path d="M.5 14.500V3q0-1.500 1.500-1.500h4l1.500 1.500h7q1 0 1 1v10.500z" fill="url(#fgr)" stroke="#b58a14"/><path d="M1.500 4.500h13" stroke="#fff3c0" stroke-opacity=".9"/><text x="8.5" y="12.5" font-size="9.5" font-weight="bold" text-anchor="middle" fill="#1a48d8" font-family="Liberation Sans,sans-serif">±R</text></svg>
<div class="t" style="left:60px;top:323px;font-size:12px">浮点运算</div>
<div class="a" style="left:34px;top:343px;width:5px;height:1px;background-image:linear-gradient(90deg,#8a8a8a 50%,transparent 50%);background-size:2px 1px"></div>
<svg style="left:24px;top:339px" width="9" height="9" viewBox="0 0 9 9"><rect x=".5" y=".5" width="8" height="8" fill="#fff" stroke="#848484"/><path d="M2 4h5M4.500 1.500v5" stroke="#000" transform="translate(0,.5)"/></svg>
<svg style="left:39px;top:336px" width="16" height="16" viewBox="0 0 16 16"><path d="M.5 14.500V3q0-1.500 1.500-1.500h4l1.500 1.500h7q1 0 1 1v10.500z" fill="url(#fgr)" stroke="#b58a14"/><path d="M1.500 4.500h13" stroke="#fff3c0" stroke-opacity=".9"/><text x="8.5" y="12.5" font-size="9.5" font-weight="bold" text-anchor="middle" fill="#1a48d8" font-family="Liberation Sans,sans-serif">±I</text></svg>
<div class="t" style="left:60px;top:339px;font-size:12px">整数运算</div>
<div class="a" style="left:34px;top:359px;width:5px;height:1px;background-image:linear-gradient(90deg,#8a8a8a 50%,transparent 50%);background-size:2px 1px"></div>
<svg style="left:24px;top:355px" width="9" height="9" viewBox="0 0 9 9"><rect x=".5" y=".5" width="8" height="8" fill="#fff" stroke="#848484"/><path d="M2 4h5M4.500 1.500v5" stroke="#000" transform="translate(0,.5)"/></svg>
<svg style="left:39px;top:352px" width="16" height="16" viewBox="0 0 16 16"><path d="M.5 14.500V3q0-1.500 1.500-1.500h4l1.500 1.500h7q1 0 1 1v10.500z" fill="url(#fgr)" stroke="#b58a14"/><path d="M1.500 4.500h13" stroke="#fff3c0" stroke-opacity=".9"/><path d="M4.500 12.500V7M8 12.500V7M11.500 12.500V7M3 9L4.500 7 6 9M6.500 9L8 7l1.500 2M10 9l1.500-2L13 9" stroke="#1a48d8" stroke-width="1.300" fill="none"/></svg>
<div class="t" style="left:60px;top:355px;font-size:12px">中断</div>
<div class="a" style="left:34px;top:375px;width:5px;height:1px;background-image:linear-gradient(90deg,#8a8a8a 50%,transparent 50%);background-size:2px 1px"></div>
<svg style="left:24px;top:371px" width="9" height="9" viewBox="0 0 9 9"><rect x=".5" y=".5" width="8" height="8" fill="#fff" stroke="#848484"/><path d="M2 4h5M4.500 1.500v5" stroke="#000" transform="translate(0,.5)"/></svg>
<svg style="left:39px;top:368px" width="16" height="16" viewBox="0 0 16 16"><path d="M.5 14.500V3q0-1.500 1.500-1.500h4l1.500 1.500h7q1 0 1 1v10.500z" fill="url(#fgr)" stroke="#b58a14"/><path d="M1.500 4.500h13" stroke="#fff3c0" stroke-opacity=".9"/><text x="8.2" y="12" font-size="6.5" font-weight="bold" text-anchor="middle" fill="#1a48d8" font-family="Liberation Sans,sans-serif">IOII</text></svg>
<div class="t" style="left:60px;top:371px;font-size:12px">逻辑运算</div>
<div class="a" style="left:34px;top:391px;width:5px;height:1px;background-image:linear-gradient(90deg,#8a8a8a 50%,transparent 50%);background-size:2px 1px"></div>
<svg style="left:24px;top:387px" width="9" height="9" viewBox="0 0 9 9"><rect x=".5" y=".5" width="8" height="8" fill="#fff" stroke="#848484"/><path d="M2 4h5M4.500 1.500v5" stroke="#000" transform="translate(0,.5)"/></svg>
<svg style="left:39px;top:384px" width="16" height="16" viewBox="0 0 16 16"><path d="M.5 14.500V3q0-1.500 1.500-1.500h4l1.500 1.500h7q1 0 1 1v10.500z" fill="url(#fgr)" stroke="#b58a14"/><path d="M1.500 4.500h13" stroke="#fff3c0" stroke-opacity=".9"/><path d="M4 11.500q4-6 8-.5" stroke="#1a48d8" stroke-width="1.400" fill="none"/><path d="M12.500 8v3.500H9" stroke="#1a48d8" stroke-width="1.400" fill="none"/></svg>
<div class="t" style="left:60px;top:387px;font-size:12px">传送</div>
<div class="a" style="left:34px;top:407px;width:5px;height:1px;background-image:linear-gradient(90deg,#8a8a8a 50%,transparent 50%);background-size:2px 1px"></div>
<svg style="left:24px;top:403px" width="9" height="9" viewBox="0 0 9 9"><rect x=".5" y=".5" width="8" height="8" fill="#fff" stroke="#848484"/><path d="M2 4h5M4.500 1.500v5" stroke="#000" transform="translate(0,.5)"/></svg>
<svg style="left:39px;top:400px" width="16" height="16" viewBox="0 0 16 16"><path d="M.5 14.500V3q0-1.500 1.500-1.500h4l1.500 1.500h7q1 0 1 1v10.500z" fill="url(#fgr)" stroke="#b58a14"/><path d="M1.500 4.500h13" stroke="#fff3c0" stroke-opacity=".9"/><path d="M2.500 7.500h3.500v4.500M4.500 10.500L6 12l1.500-1.500M9.500 12.500v-4h3.500M11.500 7L13 8.500 11.500 10" stroke="#1a48d8" fill="none" stroke-width="1.300"/></svg>
<div class="t" style="left:60px;top:403px;font-size:12px">程序控制</div>
<div class="a" style="left:34px;top:423px;width:5px;height:1px;background-image:linear-gradient(90deg,#8a8a8a 50%,transparent 50%);background-size:2px 1px"></div>
<svg style="left:24px;top:419px" width="9" height="9" viewBox="0 0 9 9"><rect x=".5" y=".5" width="8" height="8" fill="#fff" stroke="#848484"/><path d="M2 4h5M4.500 1.500v5" stroke="#000" transform="translate(0,.5)"/></svg>
<svg style="left:39px;top:416px" width="16" height="16" viewBox="0 0 16 16"><path d="M.5 14.500V3q0-1.500 1.500-1.500h4l1.500 1.500h7q1 0 1 1v10.500z" fill="url(#fgr)" stroke="#b58a14"/><path d="M1.500 4.500h13" stroke="#fff3c0" stroke-opacity=".9"/><path d="M5.500 5.500v4M8 5.500v4M10.500 5.500v4" stroke="#1a48d8" stroke-width="1.200"/><path d="M3.500 12h9M5 10.500L3.500 12 5 13.500M11 10.500l1.500 1.500-1.500 1.500" stroke="#1a48d8" stroke-width="1.200" fill="none"/></svg>
<div class="t" style="left:60px;top:419px;font-size:12px">移位/循环</div>
<div class="a" style="left:34px;top:439px;width:5px;height:1px;background-image:linear-gradient(90deg,#8a8a8a 50%,transparent 50%);background-size:2px 1px"></div>
<svg style="left:24px;top:435px" width="9" height="9" viewBox="0 0 9 9"><rect x=".5" y=".5" width="8" height="8" fill="#fff" stroke="#848484"/><path d="M2 4h5M4.500 1.500v5" stroke="#000" transform="translate(0,.5)"/></svg>
<svg style="left:39px;top:432px" width="16" height="16" viewBox="0 0 16 16"><path d="M.5 14.500V3q0-1.500 1.500-1.500h4l1.500 1.500h7q1 0 1 1v10.500z" fill="url(#fgr)" stroke="#b58a14"/><path d="M1.500 4.500h13" stroke="#fff3c0" stroke-opacity=".9"/><rect x="3" y="5.500" width="10" height="7.500" rx="1" fill="#fbe47c" stroke="#1a48d8"/><text x="8" y="12" font-size="7.5" font-weight="bold" text-anchor="middle" fill="#1a48d8" font-family="Liberation Sans,sans-serif">AB</text></svg>
<div class="t" style="left:60px;top:435px;font-size:12px">字符串</div>
<div class="a" style="left:34px;top:455px;width:5px;height:1px;background-image:linear-gradient(90deg,#8a8a8a 50%,transparent 50%);background-size:2px 1px"></div>
<svg style="left:24px;top:451px" width="9" height="9" viewBox="0 0 9 9"><rect x=".5" y=".5" width="8" height="8" fill="#fff" stroke="#848484"/><path d="M2 4h5M4.500 1.500v5" stroke="#000" transform="translate(0,.5)"/></svg>
<svg style="left:39px;top:448px" width="16" height="16" viewBox="0 0 16 16"><path d="M.5 14.500V3q0-1.500 1.500-1.500h4l1.500 1.500h7q1 0 1 1v10.500z" fill="url(#fgr)" stroke="#b58a14"/><path d="M1.500 4.500h13" stroke="#fff3c0" stroke-opacity=".9"/><rect x="3.500" y="7.500" width="9" height="4" fill="#fff" stroke="#1a48d8" stroke-width="1.300"/><path d="M6.500 7.500v4M9.500 7.500v4" stroke="#1a48d8" stroke-width="1.300"/></svg>
<div class="t" style="left:60px;top:451px;font-size:12px">表格</div>
<div class="a" style="left:34px;top:471px;width:5px;height:1px;background-image:linear-gradient(90deg,#8a8a8a 50%,transparent 50%);background-size:2px 1px"></div>
<svg style="left:24px;top:467px" width="9" height="9" viewBox="0 0 9 9"><rect x=".5" y=".5" width="8" height="8" fill="#fff" stroke="#848484"/><path d="M2 4h5M4.500 1.500v5" stroke="#000" transform="translate(0,.5)"/></svg>
<svg style="left:39px;top:464px" width="16" height="16" viewBox="0 0 16 16"><path d="M.5 14.500V3q0-1.500 1.500-1.500h4l1.500 1.500h7q1 0 1 1v10.500z" fill="url(#fgr)" stroke="#b58a14"/><path d="M1.500 4.500h13" stroke="#fff3c0" stroke-opacity=".9"/><circle cx="8" cy="9.300" r="3.600" fill="#fff" stroke="#1a48d8" stroke-width="1.300"/><path d="M8 9.300l2 2" stroke="#e03030" stroke-width="1.400"/><path d="M6.500 5l3 0" stroke="#1a48d8"/></svg>
<div class="t" style="left:60px;top:467px;font-size:12px">定时器</div>
<div class="a" style="left:34px;top:487px;width:5px;height:1px;background-image:linear-gradient(90deg,#8a8a8a 50%,transparent 50%);background-size:2px 1px"></div>
<svg style="left:24px;top:483px" width="9" height="9" viewBox="0 0 9 9"><rect x=".5" y=".5" width="8" height="8" fill="#fff" stroke="#848484"/><path d="M2 4h5M4.500 1.500v5" stroke="#000" transform="translate(0,.5)"/></svg>
<svg style="left:39px;top:480px" width="16" height="16" viewBox="0 0 16 16"><path d="M.5 14.500V3q0-1.500 1.500-1.500h4l1.500 1.500h7q1 0 1 1v10.500z" fill="url(#fgr)" stroke="#b58a14"/><path d="M1.500 4.500h13" stroke="#fff3c0" stroke-opacity=".9"/><rect x="5.500" y="6.500" width="7" height="5" fill="#fff" stroke="#2a4fb0" stroke-width="1.300"/><path d="M1 9h4.500M12.500 9h2" stroke="#2a4fb0" stroke-width="1.300"/><rect x="7.500" y="8" width="3" height="2" fill="#2a4fb0"/></svg>
<div class="t" style="left:60px;top:483px;font-size:12px"><span class="nl">PROFINET</span></div>
<div class="a" style="left:34px;top:503px;width:5px;height:1px;background-image:linear-gradient(90deg,#8a8a8a 50%,transparent 50%);background-size:2px 1px"></div>
<svg style="left:24px;top:499px" width="9" height="9" viewBox="0 0 9 9"><rect x=".5" y=".5" width="8" height="8" fill="#fff" stroke="#848484"/><path d="M2 4h5M4.500 1.500v5" stroke="#000" transform="translate(0,.5)"/></svg>
<svg style="left:39px;top:496px" width="16" height="16" viewBox="0 0 16 16"><path d="M.5 14.500V3q0-1.500 1.500-1.500h4l1.500 1.500h7q1 0 1 1v10.500z" fill="url(#fgr)" stroke="#b58a14"/><path d="M1.500 4.500h13" stroke="#fff3c0" stroke-opacity=".9"/><rect x="4.500" y="6.500" width="2.500" height="7" fill="#e6c84e" stroke="#a3861e"/><rect x="7" y="5.500" width="2.500" height="8" fill="#8cc46c" stroke="#4f8a3c"/><rect x="9.500" y="6.500" width="2.500" height="7" fill="#d9583a" stroke="#8a3f1e"/></svg>
<div class="t" style="left:60px;top:499px;font-size:12px">库</div>
<div class="a" style="left:34px;top:519px;width:5px;height:1px;background-image:linear-gradient(90deg,#8a8a8a 50%,transparent 50%);background-size:2px 1px"></div>
<svg style="left:24px;top:515px" width="9" height="9" viewBox="0 0 9 9"><rect x=".5" y=".5" width="8" height="8" fill="#fff" stroke="#848484"/><path d="M2 4h5M4.500 1.500v5" stroke="#000" transform="translate(0,.5)"/></svg>
<svg style="left:39px;top:512px" width="16" height="16" viewBox="0 0 16 16"><path d="M.5 14.500V3q0-1.500 1.500-1.500h4l1.500 1.500h7q1 0 1 1v10.500z" fill="url(#fgr)" stroke="#b58a14"/><path d="M1.500 4.500h13" stroke="#fff3c0" stroke-opacity=".9"/><rect x="3.500" y="5.500" width="9" height="7" fill="#dbe5f7" stroke="#7d8fb5"/><path d="M5 9h2M9 9h2M7 7.500v3M9 7.500v3" stroke="#6d86c8"/></svg>
<div class="t" style="left:60px;top:515px;font-size:12px">调用子例程</div>
</div>
<div class="a" style="left:0;top:999px;width:200px;height:17px;background:#f0f0f0"></div>
<div class="a" style="left:18px;top:1000px;width:141px;height:15px;background:#cdcdcd"></div>
<svg style="left:0;top:998px" width="200" height="18" viewBox="0 0 200 18"><path d="M11 5.500L7.500 9l3.500 3.500M187.500 5.500L191 9l-3.500 3.500" stroke="#444" stroke-width="2.100" fill="none"/></svg>
<!-- ===== center editor panel ===== -->
<div class="a" style="left:204px;top:138px;width:794px;height:872px;background:#fff"></div>
<div class="a" style="left:204px;top:138px;width:1px;height:870px;background:#9a9a9a"></div>
<div class="a" style="left:205px;top:138px;width:1px;height:870px;background:#6a6a6a"></div>
<div class="a" style="left:206px;top:185px;width:3px;height:822px;background:#cddcf7"></div>
<div class="a" style="left:994px;top:185px;width:1px;height:822px;background:#f4f7fd"></div>
<div class="a" style="left:995px;top:138px;width:1px;height:870px;background:#8a8a8a"></div>
<div class="a" style="left:206px;top:1005px;width:789px;height:2px;background:linear-gradient(90deg,#d3e0f8 0,#e4ecfb 40%,#fbfcff 100%)"></div>
<div class="a" style="left:205px;top:1007px;width:791px;height:1px;background:#aaa"></div>
<div class="a" style="left:204px;top:138px;width:792px;height:1px;background:#8a8a8a"></div>
<div class="a" style="left:206px;top:139px;width:789px;height:46px;background:linear-gradient(#d3d6db 0,#c3c7ce 10px,#a9aeb8 21px,#9ca1ac 27px,#b2b7c0 36px,#c9cdd4 46px)"></div>
<div class="a" style="left:206px;top:185px;width:789px;height:1px;background:#b7c8ec"></div>
<svg style="left:205px;top:140px" width="795" height="24" viewBox="0 0 795 24">
<defs>
<radialGradient id="pg" cx=".4" cy=".35" r=".7"><stop offset="0" stop-color="#8af07a"/><stop offset="1" stop-color="#18a018"/></radialGradient>
<radialGradient id="rg" cx=".4" cy=".35" r=".7"><stop offset="0" stop-color="#ff9a7a"/><stop offset="1" stop-color="#d8300c"/></radialGradient>
<linearGradient id="lk" x1="0" y1="0" x2="0" y2="1"><stop offset="0" stop-color="#9a9a9a"/><stop offset="1" stop-color="#6a6a6a"/></linearGradient>
</defs>
<circle cx="14" cy="12" r="6.800" fill="url(#pg)" stroke="#1a8a1a" stroke-width=".8"/><path d="M11.800 8.300l5.500 3.700-5.500 3.700z" fill="#fff"/>
<circle cx="36" cy="12" r="6.800" fill="url(#rg)" stroke="#c02a0a" stroke-width=".8"/><rect x="33.200" y="9.200" width="5.600" height="5.600" rx="1" fill="#fff"/>
<path d="M51.500 7.500h7l3 3v8h-10z" fill="#fff" stroke="#6d7fa8"/><path d="M55.500 5.500h6v5" fill="none" stroke="#6d7fa8"/><path d="M53 12l3 3.500 8-9.500" stroke="#20a020" stroke-width="2" fill="none"/>
<path d="M73.500 5v14" stroke="#555"/><path d="M74.500 5v14" stroke="#e9ebee"/>
<path d="M90 5l-7 7.500h4v6.500h6v-6.500h4z" fill="#3aa0f0" stroke="#0f6fc8"/>
<path d="M156 19l-7-7.500h4V5h6v6.500h4z" fill="#3cc03c" stroke="#168a16"/>
<path d="M215.500 5v14" stroke="#555"/><path d="M216.500 5v14" stroke="#e9ebee"/>
<!-- insert icon -->
<path d="M225.500 5v14M226 15.500h3M229.500 13.500v4M232.500 13.500v4M233 15.500h2" stroke="#333"/><circle cx="236.500" cy="15.500" r="1.800" fill="none" stroke="#333" stroke-dasharray="1 1"/><path d="M230 9l4-4v2.500h5v3h-5V13z" fill="#777"/>
<!-- delete icon -->
<path d="M292.500 4v15M293 8.500h3M296.500 6v5M299.500 6v5M300 8.500h2" stroke="#333"/><circle cx="304" cy="8.500" r="2" fill="none" stroke="#333"/><path d="M298 11l8 8M306 11l-8 8" stroke="#555" stroke-width="2"/>
<path d="M356.500 5v14" stroke="#555"/><path d="M357.500 5v14" stroke="#e9ebee"/>
<!-- two tree icons -->
<g><rect x="369.500" y="5.500" width="11" height="12" fill="#fff" stroke="#3c6fd0"/><rect x="369.500" y="5.500" width="11" height="2.500" fill="#6d9be8"/><rect x="364.500" y="4.500" width="3.500" height="3.500" fill="#fff" stroke="#2050c0"/><rect x="368.500" y="8.500" width="3.500" height="3.500" fill="#fff" stroke="#2050c0"/><rect x="372.500" y="12.500" width="3.500" height="3.500" fill="#fff" stroke="#2050c0"/><path d="M366 8v2h2M370 12v2h2" stroke="#2050c0" fill="none"/><path d="M364 12l4 3.500-4 3.500z" fill="#30b030"/></g>
<g transform="translate(23,0)"><rect x="369.500" y="5.500" width="11" height="12" fill="#b0b0b0" stroke="#666"/><rect x="369.500" y="5.500" width="11" height="2.500" fill="#888"/><rect x="364.500" y="4.500" width="3.500" height="3.500" fill="#ccc" stroke="#555"/><rect x="368.500" y="8.500" width="3.500" height="3.500" fill="#ccc" stroke="#555"/><rect x="372.500" y="12.500" width="3.500" height="3.500" fill="#ccc" stroke="#555"/><path d="M364.500 12v7M367.500 12v7" stroke="#555" stroke-width="1.500"/></g>
<path d="M410.500 5v14" stroke="#555"/><path d="M411.500 5v14" stroke="#e9ebee"/>
<!-- gray box icons -->
<rect x="418.500" y="9.500" width="13" height="9" rx="2.500" fill="#a6a6a6" stroke="#6e6e6e"/>
<rect x="440.500" y="10.500" width="13" height="8" rx="2.500" fill="#a6a6a6" stroke="#6e6e6e"/><path d="M438 9l4-4v2.500h7v3h-7V13z" fill="#666"/>
<rect x="462.500" y="10.500" width="13" height="8" rx="2.500" fill="#a6a6a6" stroke="#6e6e6e"/><path d="M479 9l-4-4v2.500h-7v3h7V13z" fill="#666"/>
<rect x="484.500" y="8.500" width="12" height="9" rx="2.500" fill="#a6a6a6" stroke="#6e6e6e"/><rect x="486.500" y="10.500" width="12" height="9" rx="2.500" fill="#a6a6a6" stroke="#6e6e6e"/><path d="M487 4l6 6M493 4l-6 6" stroke="#555" stroke-width="1.300"/>
<path d="M505.500 5v14" stroke="#555"/><path d="M506.500 5v14" stroke="#e9ebee"/>
<rect x="513.500" y="5.500" width="13" height="13" rx="2" fill="#2db52d" stroke="#148a14"/><path d="M516 12h8M520.500 8.500l3.500 3.500-3.500 3.500" stroke="#fff" stroke-width="1.600" fill="none"/>
<path d="M534.500 5v14" stroke="#555"/><path d="M535.500 5v14" stroke="#e9ebee"/>
<!-- locks -->
<g><path d="M546 11V8.500a3 3 0 0 1 6 0V11" fill="none" stroke="#777" stroke-width="2"/><rect x="543.500" y="10.500" width="11" height="8" fill="url(#lk)" stroke="#555"/><path d="M549 12.500l2 2h-1.300v2h-1.400v-2H547z" fill="#333"/></g>
<g transform="translate(23,0)"><path d="M542 11V8.500a3 3 0 0 1 6 0V10" fill="none" stroke="#777" stroke-width="2"/><rect x="545.500" y="10.500" width="11" height="8" fill="url(#lk)" stroke="#555"/><path d="M551 12.500l2 2h-1.300v2h-1.400v-2H549z" fill="#333"/></g>
<g transform="translate(46,0)"><path d="M542 11V8.500a3 3 0 0 1 6 0V10" fill="none" stroke="#d9a520" stroke-width="2"/><rect x="545.500" y="10.500" width="11" height="8" fill="#f6c840" stroke="#b8860b"/><path d="M551 12.500l2 2h-1.300v2h-1.400v-2H549z" fill="#333"/><path d="M553 5.500h5M555.500 3v5" stroke="#2050c0" stroke-width="1.200"/></g>
<path d="M608.500 5v14" stroke="#555"/><path d="M609.500 5v14" stroke="#e9ebee"/>
<!-- branch icons -->
<path d="M616 8.500h10M619.500 8.500v8h7" stroke="#666" stroke-width="1.600" fill="none"/><path d="M625.500 5.500l3.500 3-3.500 3zM625.500 13.500l3.500 3-3.500 3z" fill="#666"/>
<path d="M638 11.500h15M646.500 11.500v5" stroke="#666" stroke-width="1.600" fill="none"/><path d="M643.500 15.500h6l-3 3.500z" fill="#666"/>
<path d="M660 13.500h15M668.500 13.500v-5" stroke="#666" stroke-width="1.600" fill="none"/><path d="M665.500 9.500h6l-3-3.500z" fill="#666"/>
<path d="M682 12.500h12" stroke="#666" stroke-width="1.600" fill="none"/><path d="M693 9l4.500 3.500-4.500 3.500z" fill="#666"/>
<path d="M703.500 5v14" stroke="#555"/><path d="M704.500 5v14" stroke="#e9ebee"/>
<path d="M712 12.500h5M723 12.500h5M717.500 8v9M722.500 8v9" stroke="#666" stroke-width="1.600" fill="none"/>
<path d="M735 12.500h3.500M741 8q-4 4.500 0 9M745 8q4 4.500 0 9" stroke="#666" stroke-width="1.600" fill="none"/>
<path d="M757 12.500h6" stroke="#666" stroke-width="1.600"/><rect x="763.500" y="7.500" width="7" height="11" fill="none" stroke="#666" stroke-width="1.600"/>
<path d="M778.500 5v14" stroke="#555"/><path d="M779.500 5v14" stroke="#e9ebee"/>
<path d="M790 9q-3 3 0 6" stroke="#2050c0" stroke-width="1.500" fill="none"/>
</svg>
<div class="rt" style="left:308px;top:144px;font-size:13px">上传</div><div class="dd" style="left:340px;top:151px;border-top-color:#555"></div>
<div class="rt" style="left:375px;top:144px;font-size:13px">下载</div><div class="dd" style="left:407px;top:151px;border-top-color:#555"></div>
<div class="rt" style="left:449px;top:144px;font-size:13px;color:#8b8e95">插入</div><div class="dd" style="left:482px;top:151px;border-top-color:#777"></div>
<div class="rt" style="left:516px;top:144px;font-size:13px;color:#8b8e95">删除</div><div class="dd" style="left:549px;top:151px;border-top-color:#777"></div>
<div class="a" style="left:425px;top:184px;width:570px;height:1px;background:#9c9fa6"></div>
<div class="a" style="left:206px;top:184px;width:17px;height:1px;background:#9c9fa6"></div>
<svg style="left:205px;top:165px" width="795" height="21" viewBox="0 0 795 21">
<defs>
<linearGradient id="tm" x1="0" y1="0" x2="0" y2="1"><stop offset="0" stop-color="#ffffff"/><stop offset=".45" stop-color="#f2f6fd"/><stop offset=".5" stop-color="#dbe5f8"/><stop offset="1" stop-color="#c3d2f1"/></linearGradient>
<linearGradient id="ts" x1="0" y1="0" x2="0" y2="1"><stop offset="0" stop-color="#ffffa2"/><stop offset=".5" stop-color="#fdf08a"/><stop offset=".55" stop-color="#fddc70"/><stop offset="1" stop-color="#fed77a"/></linearGradient>
<linearGradient id="ti" x1="0" y1="0" x2="0" y2="1"><stop offset="0" stop-color="#f2f9cc"/><stop offset=".5" stop-color="#e0ecb8"/><stop offset=".55" stop-color="#ccdaa4"/><stop offset="1" stop-color="#c6d4a0"/></linearGradient>
</defs>
<path d="M108.500 19.500V4.500q0-2 2-2h52q2 0 2 2v15z" fill="url(#ts)" stroke="#e0c060" stroke-width="1"/>
<path d="M165.500 19.500V4.500q0-2 2-2h50q2 0 2 2v15z" fill="url(#ti)" stroke="#b8c496" stroke-width="1"/>
<path d="M18 21L37 2.500q1.500-1.500 3.500-1.500H105q2.500 0 2.500 2.500V21z" fill="url(#tm)" stroke="#9fb3dc" stroke-width="1"/>
<path d="M11.500 5.500L7 9.500l4.500 4z" fill="none" stroke="#5a5a5a"/>
<path d="M773.500 5.500l4.500 4-4.500 4z" fill="none" stroke="#5a5a5a"/>
<path d="M94 7l7 7M101 7l-7 7" stroke="#333" stroke-width="1.300"/>
</svg>
<div class="t" style="left:256px;top:170px;font-size:11.500px;font-weight:bold">MAIN</div>
<div class="t" style="left:328px;top:170px;font-size:11px;letter-spacing:-.2px">SBR_0</div>
<div class="t" style="left:385px;top:170px;font-size:11px;letter-spacing:-.2px">INT_0</div>
<div class="a" style="left:209px;top:186px;width:23px;height:802px;background:repeating-conic-gradient(#bdbdbd 0 25%,#f3f3f3 0 50%) 0 0/2px 2px"></div>
<div class="t" style="left:242px;top:193px;font-size:12px;color:#008000">程序注释</div>
<div class="t" style="left:242px;top:214px;font-size:12px;color:#008000">程序段注释</div>
<div class="a" style="left:209px;top:208px;width:300px;height:2px;background:linear-gradient(90deg,#6f6f6f 0,#8a8a8a 60px,rgba(190,190,190,.8) 180px,rgba(255,255,255,0) 300px)"></div>
<div class="t" style="left:209px;width:23px;text-align:center;top:214px;font-size:12px;font-weight:bold">1</div>
<div class="a" style="left:209px;top:323px;width:300px;height:2px;background:linear-gradient(90deg,#6f6f6f 0,#8a8a8a 60px,rgba(190,190,190,.8) 180px,rgba(255,255,255,0) 300px)"></div>
<div class="t" style="left:209px;width:23px;text-align:center;top:329px;font-size:12px;font-weight:bold">2</div>
<div class="t" style="left:242px;top:330px;font-size:12px;color:#8c8c8c">输入注释</div>
<div class="a" style="left:209px;top:438px;width:300px;height:2px;background:linear-gradient(90deg,#6f6f6f 0,#8a8a8a 60px,rgba(190,190,190,.8) 180px,rgba(255,255,255,0) 300px)"></div>
<div class="t" style="left:209px;width:23px;text-align:center;top:444px;font-size:12px;font-weight:bold">3</div>
<div class="t" style="left:242px;top:445px;font-size:12px;color:#8c8c8c">输入注释</div>
<div class="a" style="left:209px;top:553px;width:300px;height:2px;background:linear-gradient(90deg,#6f6f6f 0,#8a8a8a 60px,rgba(190,190,190,.8) 180px,rgba(255,255,255,0) 300px)"></div>
<div class="t" style="left:209px;width:23px;text-align:center;top:559px;font-size:12px;font-weight:bold">4</div>
<div class="t" style="left:242px;top:560px;font-size:12px;color:#8c8c8c">输入注释</div>
<div class="a" style="left:209px;top:668px;width:300px;height:2px;background:linear-gradient(90deg,#6f6f6f 0,#8a8a8a 60px,rgba(190,190,190,.8) 180px,rgba(255,255,255,0) 300px)"></div>
<div class="t" style="left:209px;width:23px;text-align:center;top:674px;font-size:12px;font-weight:bold">5</div>
<div class="t" style="left:242px;top:675px;font-size:12px;color:#8c8c8c">输入注释</div>
<div class="a" style="left:209px;top:783px;width:300px;height:2px;background:linear-gradient(90deg,#6f6f6f 0,#8a8a8a 60px,rgba(190,190,190,.8) 180px,rgba(255,255,255,0) 300px)"></div>
<div class="t" style="left:209px;width:23px;text-align:center;top:789px;font-size:12px;font-weight:bold">6</div>
<div class="t" style="left:242px;top:790px;font-size:12px;color:#8c8c8c">输入注释</div>
<div class="a" style="left:209px;top:898px;width:300px;height:2px;background:linear-gradient(90deg,#6f6f6f 0,#8a8a8a 60px,rgba(190,190,190,.8) 180px,rgba(255,255,255,0) 300px)"></div>
<div class="t" style="left:209px;width:23px;text-align:center;top:904px;font-size:12px;font-weight:bold">7</div>
<div class="t" style="left:242px;top:905px;font-size:12px;color:#8c8c8c">输入注释</div>
<div class="a" style="left:483px;top:289px;width:100px;height:17px;border:1px dotted #000"></div>
<div class="a" style="left:977px;top:186px;width:17px;height:802px;background:#f0f0f0"></div>
<svg style="left:976px;top:186px" width="18" height="802" viewBox="0 0 18 802"><path d="M5 11.500L8.500 8l3.500 3.500M5 792l3.500 3.500 3.500-3.500" stroke="#444" stroke-width="2.100" fill="none"/></svg>
<div class="a" style="left:209px;top:988px;width:785px;height:17px;background:#f0f0f0"></div>
<div class="a" style="left:238px;top:989px;width:169px;height:15px;background:#cdcdcd"></div>
<svg style="left:209px;top:988px" width="785" height="17" viewBox="0 0 785 17"><path d="M11 5L7.500 8.500 11 12M756.500 5l3.500 3.500-3.500 3.500" stroke="#444" stroke-width="2.100" fill="none"/></svg>
<div class="a" style="left:204px;top:1014px;width:1716px;height:2px;background:linear-gradient(#f2f2f2,#bdbdbd)"></div>
<!-- ===== right panel : status chart ===== -->
<div class="a" style="left:1002px;top:138px;width:918px;height:848px;background:#fff"></div>
<div class="a" style="left:1002px;top:139px;width:917px;height:20px;background:#a0a2a1"></div>
<div class="t" style="left:1007px;top:141px;font-size:13px;color:#4a4a4a">状态图表</div>
<svg style="left:1887px;top:142px" width="30" height="12" viewBox="0 0 30 12"><path d="M4 .5h5M4.500.5v5.500M8 .5v5.500M7.500.5v5.500M2.500 6.500h7.500M6.500 6.500v4.500" stroke="#444" stroke-width="1.200" fill="none"/><path d="M19 1.500l8 8M27 1.500l-8 8" stroke="#444" stroke-width="1.400"/></svg>
<div class="a" style="left:1002px;top:159px;width:917px;height:2px;background:#f2f2f2"></div>
<div class="a" style="left:1005px;top:161px;width:912px;height:25px;background:linear-gradient(#cfd3d9 0,#c6cad1 8px,#aab0ba 17px,#969ca9 25px)"></div>
<div class="a" style="left:1002px;top:159px;width:3px;height:827px;background:#f0f0f0"></div>
<div class="a" style="left:1005px;top:161px;width:1px;height:804px;background:#9a9a9a"></div>
<div class="a" style="left:1006px;top:186px;width:910px;height:779px;border:2px solid #c3d3f4;border-bottom:none"></div>
<div class="a" style="left:1916px;top:161px;width:1px;height:825px;background:#a0a0a0"></div>
<div class="a" style="left:1917px;top:159px;width:3px;height:827px;background:#f4f4f4"></div>
<svg style="left:1005px;top:161px" width="360" height="26" viewBox="0 0 360 26">
<g transform="translate(2.500,0)"><rect x="6.500" y="7.500" width="12" height="11" fill="#fff" stroke="#5a7fc8"/><rect x="6.500" y="7.500" width="12" height="3" fill="#5b86d8"/><path d="M8 13h9M8 16h9M11 11v7M14.500 11v7" stroke="#9fb0d0"/><path d="M7.500 3v6M4.500 6h6" stroke="#2ca02c" stroke-width="2.200"/></g>
<path d="M28.500 12h6l-3 3.500z" fill="#555"/>
<g transform="translate(2.500,0)"><rect x="41.500" y="7.500" width="12" height="11" fill="#9a9a9a" stroke="#6a6a6a"/><path d="M43 13h9M43 16h9M46 11v7M49.500 11v7" stroke="#777"/><path d="M40 4l7 6M47 4l-7 6" stroke="#666" stroke-width="1.300"/></g>
<path d="M63.500 12h6l-3 3.500z" fill="#777"/>
<path d="M75.500 6v14" stroke="#555"/><path d="M76.500 6v14" stroke="#e9ebee"/>
<rect x="84.500" y="7.500" width="12" height="11" fill="#fff" stroke="#3c6fd0"/><rect x="84.500" y="7.500" width="12" height="2.500" fill="#5b86d8"/><path d="M88 11.500l5 3-5 3z" fill="#20a020"/>
<rect x="106.500" y="7.500" width="12" height="11" fill="#a9a9a9" stroke="#6a6a6a"/><path d="M110.500 11v5.500M114.500 11v5.500" stroke="#6a6a6a" stroke-width="1.800"/>
<path d="M127.500 6v14" stroke="#555"/><path d="M128.500 6v14" stroke="#e9ebee"/>
<g><circle cx="140" cy="15.500" r="3" fill="#e8f2ff" stroke="#6a86b8" stroke-width="1.200"/><circle cx="148" cy="15.500" r="3" fill="#e8f2ff" stroke="#6a86b8" stroke-width="1.200"/><path d="M138 13l2-6M150 13l-1-7M143 15h2" stroke="#6a86b8" stroke-width="1.200" fill="none"/></g>
<path d="M158 19l1-3.500 9-10 2.500 2.500-9 10z" fill="#f0c040" stroke="#a07818" stroke-width=".8"/><path d="M167.500 6l2-2 2.500 2.500-2 2z" fill="#e05a4a"/><path d="M158 19l1-3.500 2.500 2.500z" fill="#222"/>
<path d="M179.500 6v14" stroke="#555"/><path d="M180.500 6v14" stroke="#e9ebee"/>
<g><path d="M190 12V9.500a3 3 0 0 1 6 0V12" fill="none" stroke="#777" stroke-width="2"/><rect x="187.500" y="11.500" width="11" height="8" fill="#858585" stroke="#555"/><path d="M193 13.500l2 2h-1.300v2h-1.400v-2H191z" fill="#333"/></g>
<g transform="translate(23,0)"><path d="M186 12V9.500a3 3 0 0 1 6 0V11" fill="none" stroke="#777" stroke-width="2"/><rect x="189.500" y="11.500" width="11" height="8" fill="#858585" stroke="#555"/><path d="M195 13.500l2 2h-1.300v2h-1.400v-2H193z" fill="#333"/></g>
<g transform="translate(46,0)"><path d="M186 12V9.500a3 3 0 0 1 6 0V11" fill="none" stroke="#d9a520" stroke-width="2"/><rect x="189.500" y="11.500" width="11" height="8" fill="#f6c840" stroke="#b8860b"/><path d="M195 13.500l2 2h-1.300v2h-1.400v-2H193z" fill="#333"/><path d="M197 6.500h5M199.500 4v5" stroke="#222" stroke-width="1.100"/></g>
<g transform="translate(118,0)"><circle cx="140" cy="15.500" r="3" fill="#e8f2ff" stroke="#6a86b8" stroke-width="1.200"/><circle cx="148" cy="15.500" r="3" fill="#e8f2ff" stroke="#6a86b8" stroke-width="1.200"/><path d="M138 13l2-6M150 13l-1-7M143 15h2" stroke="#6a86b8" stroke-width="1.200" fill="none"/><rect x="138.500" y="5.500" width="6" height="5" fill="#f6c840" stroke="#b8860b"/></g>
<path d="M276.500 6v14" stroke="#555"/><path d="M277.500 6v14" stroke="#e9ebee"/>
<g transform="translate(-12,0)"><rect x="295.500" y="7.500" width="13" height="11" fill="#fff" stroke="#8a96b0"/><path d="M297 11h10M297 14h10M299.500 8v10M303 8v10" stroke="#c9d0e0"/><path d="M296.500 17l3-4 2.500 2 3-5 3 3" stroke="#e03030" stroke-width="1.300" fill="none"/>
<rect x="319.500" y="8.500" width="14" height="8" rx="3.500" fill="#f2f6ff" stroke="#2a4fc0" stroke-width="1.200"/><circle cx="322.500" cy="12.500" r="1" fill="#2a4fc0"/>
<path d="M341 12h6l-3 3.500z" fill="#555"/></g>
</svg>
<div class="a" style="left:1008px;top:188px;width:631px;height:115px;background:#8a8a8a"></div>
<div class="a" style="left:1009px;top:189px;width:29px;height:18px;background:linear-gradient(#ededed 0,#d9d9d9 45%,#b9b9b9 55%,#8f8f8f 100%)"></div>
<div class="a" style="left:1039px;top:189px;width:149px;height:18px;background:linear-gradient(#ededed 0,#d9d9d9 45%,#b9b9b9 55%,#8f8f8f 100%)"></div>
<div class="t" style="left:1043px;top:193px;font-size:12px;color:#000">地址</div>
<div class="a" style="left:1189px;top:189px;width:149px;height:18px;background:linear-gradient(#ededed 0,#d9d9d9 45%,#b9b9b9 55%,#8f8f8f 100%)"></div>
<div class="t" style="left:1193px;top:193px;font-size:12px;color:#000">格式</div>
<div class="a" style="left:1339px;top:189px;width:149px;height:18px;background:linear-gradient(#ededed 0,#d9d9d9 45%,#b9b9b9 55%,#8f8f8f 100%)"></div>
<div class="t" style="left:1343px;top:193px;font-size:12px;color:#000">当前值</div>
<div class="a" style="left:1489px;top:189px;width:149px;height:18px;background:linear-gradient(#ededed 0,#d9d9d9 45%,#b9b9b9 55%,#8f8f8f 100%)"></div>
<div class="t" style="left:1493px;top:193px;font-size:12px;color:#000">新值</div>
<div class="a" style="left:1009px;top:208px;width:29px;height:18px;background:linear-gradient(#e6e6e6,#c9c9c9)"></div>
<div class="a" style="left:1039px;top:208px;width:149px;height:18px;background:#fff"></div>
<div class="a" style="left:1189px;top:208px;width:149px;height:18px;background:#fff"></div>
<div class="a" style="left:1339px;top:208px;width:149px;height:18px;background:#ecebe9"></div>
<div class="a" style="left:1489px;top:208px;width:149px;height:18px;background:#fff"></div>
<div class="a" style="left:1009px;top:227px;width:29px;height:18px;background:linear-gradient(#e6e6e6,#c9c9c9)"></div>
<div class="a" style="left:1039px;top:227px;width:149px;height:18px;background:#fff"></div>
<div class="a" style="left:1189px;top:227px;width:149px;height:18px;background:#fff"></div>
<div class="a" style="left:1339px;top:227px;width:149px;height:18px;background:#ecebe9"></div>
<div class="a" style="left:1489px;top:227px;width:149px;height:18px;background:#fff"></div>
<div class="a" style="left:1009px;top:246px;width:29px;height:18px;background:linear-gradient(#e6e6e6,#c9c9c9)"></div>
<div class="a" style="left:1039px;top:246px;width:149px;height:18px;background:#fff"></div>
<div class="a" style="left:1189px;top:246px;width:149px;height:18px;background:#fff"></div>
<div class="a" style="left:1339px;top:246px;width:149px;height:18px;background:#ecebe9"></div>
<div class="a" style="left:1489px;top:246px;width:149px;height:18px;background:#fff"></div>
<div class="a" style="left:1009px;top:265px;width:29px;height:18px;background:linear-gradient(#e6e6e6,#c9c9c9)"></div>
<div class="a" style="left:1039px;top:265px;width:149px;height:18px;background:#ecebe9"></div>
<div class="a" style="left:1189px;top:265px;width:149px;height:18px;background:#ecebe9"></div>
<div class="a" style="left:1339px;top:265px;width:149px;height:18px;background:#ecebe9"></div>
<div class="a" style="left:1489px;top:265px;width:149px;height:18px;background:#ecebe9"></div>
<div class="a" style="left:1009px;top:284px;width:29px;height:18px;background:linear-gradient(#e6e6e6,#c9c9c9)"></div>
<div class="a" style="left:1039px;top:284px;width:149px;height:18px;background:#ecebe9"></div>
<div class="a" style="left:1189px;top:284px;width:149px;height:18px;background:#ecebe9"></div>
<div class="a" style="left:1339px;top:284px;width:149px;height:18px;background:#ecebe9"></div>
<div class="a" style="left:1489px;top:284px;width:149px;height:18px;background:#ecebe9"></div>
<div class="a" style="left:1005px;top:964px;width:911px;height:22px;background:#ebebeb;border-top:1px solid #6a6a6a"></div>
<svg style="left:1005px;top:964px" width="140" height="22" viewBox="0 0 140 22">
<path d="M68 .5l9 16.500h40l9-16.500z" fill="#fff"/><path d="M68 .5l9 16.500h40l9-16.500" fill="none" stroke="#555"/>
<path d="M6.500 5.500v7M12 5.500L8 9l4 3.500zM27 5.500L23 9l4 3.500zM39 5.500L43 9l-4 3.500zM55 5.500L59 9l-4 3.500zM60.500 5.500v7" fill="#666" stroke="#666" stroke-width=".8"/>
</svg>
<div class="t" style="left:1081px;top:967px;font-size:12.500px;font-weight:bold">图表 <span style="font-size:11px">1</span></div>
<div class="a" style="left:1002px;top:986px;width:918px;height:28px;background:#535353"></div>
<div class="a" style="left:1076px;top:987px;width:82px;height:20px;background:linear-gradient(#eceff2,#d3d7dd);border:1px solid #b9f0f4;border-radius:2px 2px 5px 5px"></div>
<svg style="left:1005px;top:989px" width="230" height="18" viewBox="0 0 230 18">
<g><rect x="4.500" y="3.500" width="12" height="11" fill="#fff" stroke="#6d8fd0"/><rect x="4.500" y="3.500" width="12" height="3" fill="#5b86d8"/><rect x="6.500" y="8.500" width="8" height="4.500" rx="2.200" fill="#e6eefc" stroke="#4a6fc0"/></g>
<g transform="translate(71,0)"><rect x="4.500" y="3.500" width="12" height="11" fill="#fff" stroke="#6d8fd0"/><rect x="4.500" y="3.500" width="12" height="3" fill="#5b86d8"/><path d="M6 9h9M6 11.500h9M8.500 7v7M12 7v7" stroke="#9fb0d0"/></g>
<g transform="translate(157,0)"><path d="M4.500 2.500h7l3 3v9h-10z" fill="#fff" stroke="#7d8cb0"/><path d="M6 6h4M6 8.500h7M6 11h7M6 13.500h7" stroke="#9fb0d0"/></g>
</svg>
<div class="t" style="left:1026px;top:991px;font-size:13px;color:#fff">符号表</div>
<div class="t" style="left:1097px;top:991px;font-size:13px;color:#000">状态图表</div>
<div class="t" style="left:1182px;top:991px;font-size:13px;color:#fff">数据块</div>
<!-- ===== system block dialog ===== -->
<div class="a" id="dlg" style="left:619px;top:196px;width:683px;height:641px;background:#f0f0f0;border:1px solid #9c9c9c;box-shadow:0 4px 11px rgba(0,0,0,.30),0 0 7px rgba(0,0,0,.12)"></div>
<div class="a" style="left:620px;top:197px;width:681px;height:30px;background:#fff"></div>
<div class="t" style="left:628px;top:206px;font-size:12px;color:#9a9a9a">系统块</div>
<svg style="left:1280px;top:205px" width="12" height="12" viewBox="0 0 12 12"><path d="M.5.5l11 11M11.500.5l-11 11" stroke="#6a6a6a" stroke-width="1"/></svg>
<div class="a" style="left:620px;top:227px;width:662px;height:172px;background:#8c8c8c"></div>
<div class="a" style="left:621px;top:228px;width:44px;height:18px;background:linear-gradient(#e9e9e9 0,#d6d6d6 40%,#b4b4b4 60%,#8c8c8c 100%)"></div>
<div class="a" style="left:666px;top:228px;width:174px;height:18px;background:linear-gradient(#e9e9e9 0,#d6d6d6 40%,#b4b4b4 60%,#8c8c8c 100%)"></div>
<div class="t" style="left:670px;top:232px;font-size:12px">模块</div>
<div class="a" style="left:841px;top:228px;width:99px;height:18px;background:linear-gradient(#e9e9e9 0,#d6d6d6 40%,#b4b4b4 60%,#8c8c8c 100%)"></div>
<div class="t" style="left:845px;top:232px;font-size:12px">版本</div>
<div class="a" style="left:941px;top:228px;width:69px;height:18px;background:linear-gradient(#e9e9e9 0,#d6d6d6 40%,#b4b4b4 60%,#8c8c8c 100%)"></div>
<div class="t" style="left:945px;top:232px;font-size:12px">输入</div>
<div class="a" style="left:1011px;top:228px;width:69px;height:18px;background:linear-gradient(#e9e9e9 0,#d6d6d6 40%,#b4b4b4 60%,#8c8c8c 100%)"></div>
<div class="t" style="left:1015px;top:232px;font-size:12px">输出</div>
<div class="a" style="left:1081px;top:228px;width:199px;height:18px;background:linear-gradient(#e9e9e9 0,#d6d6d6 40%,#b4b4b4 60%,#8c8c8c 100%)"></div>
<div class="t" style="left:1085px;top:232px;font-size:12px">订货号</div>
<div class="a" style="left:621px;top:247px;width:44px;height:18px;background:linear-gradient(#e6e6e6 0,#cfcfcf 45%,#a8a8a8 70%,#888 100%)"></div>
<div class="a" style="left:666px;top:247px;width:174px;height:18px;background:#fff"></div>
<div class="a" style="left:841px;top:247px;width:99px;height:18px;background:#ebebed"></div>
<div class="a" style="left:941px;top:247px;width:69px;height:18px;background:#ebebed"></div>
<div class="a" style="left:1011px;top:247px;width:69px;height:18px;background:#ebebed"></div>
<div class="a" style="left:1081px;top:247px;width:199px;height:18px;background:#ebebed"></div>
<div class="t nr" style="left:625px;top:250px">CPU</div>
<div class="t nr" style="left:670px;top:250px">CPU ST60 (DC/DC/DC)</div>
<div class="t nr" style="left:845px;top:250px">V01.00.00_00.00...</div>
<div class="t nr" style="left:945px;top:250px">I0.0</div>
<div class="t nr" style="left:1015px;top:250px">Q0.0</div>
<div class="t nr" style="left:1085px;top:250px">6ES7 288-1ST60-0AA0</div>
<div class="a" style="left:621px;top:266px;width:44px;height:18px;background:linear-gradient(#e6e6e6 0,#cfcfcf 45%,#a8a8a8 70%,#888 100%)"></div>
<div class="a" style="left:666px;top:266px;width:174px;height:18px;background:#fff"></div>
<div class="a" style="left:841px;top:266px;width:99px;height:18px;background:#ebebed"></div>
<div class="a" style="left:941px;top:266px;width:69px;height:18px;background:#ebebed"></div>
<div class="a" style="left:1011px;top:266px;width:69px;height:18px;background:#ebebed"></div>
<div class="a" style="left:1081px;top:266px;width:199px;height:18px;background:#ebebed"></div>
<div class="t nr" style="left:625px;top:269px">SB</div>
<div class="a" style="left:621px;top:285px;width:44px;height:18px;background:linear-gradient(#e6e6e6 0,#cfcfcf 45%,#a8a8a8 70%,#888 100%)"></div>
<div class="a" style="left:666px;top:285px;width:174px;height:18px;background:#fff"></div>
<div class="a" style="left:841px;top:285px;width:99px;height:18px;background:#ebebed"></div>
<div class="a" style="left:941px;top:285px;width:69px;height:18px;background:#ebebed"></div>
<div class="a" style="left:1011px;top:285px;width:69px;height:18px;background:#ebebed"></div>
<div class="a" style="left:1081px;top:285px;width:199px;height:18px;background:#ebebed"></div>
<div class="t nr" style="left:625px;top:288px">EM 0</div>
<div class="a" style="left:621px;top:304px;width:44px;height:18px;background:linear-gradient(#e6e6e6 0,#cfcfcf 45%,#a8a8a8 70%,#888 100%)"></div>
<div class="a" style="left:666px;top:304px;width:174px;height:18px;background:#ebebed"></div>
<div class="a" style="left:841px;top:304px;width:99px;height:18px;background:#ebebed"></div>
<div class="a" style="left:941px;top:304px;width:69px;height:18px;background:#ebebed"></div>
<div class="a" style="left:1011px;top:304px;width:69px;height:18px;background:#ebebed"></div>
<div class="a" style="left:1081px;top:304px;width:199px;height:18px;background:#ebebed"></div>
<div class="t nr" style="left:625px;top:307px">EM 1</div>
<div class="a" style="left:621px;top:323px;width:44px;height:18px;background:linear-gradient(#e6e6e6 0,#cfcfcf 45%,#a8a8a8 70%,#888 100%)"></div>
<div class="a" style="left:666px;top:323px;width:174px;height:18px;background:#ebebed"></div>
<div class="a" style="left:841px;top:323px;width:99px;height:18px;background:#ebebed"></div>
<div class="a" style="left:941px;top:323px;width:69px;height:18px;background:#ebebed"></div>
<div class="a" style="left:1011px;top:323px;width:69px;height:18px;background:#ebebed"></div>
<div class="a" style="left:1081px;top:323px;width:199px;height:18px;background:#ebebed"></div>
<div class="t nr" style="left:625px;top:326px">EM 2</div>
<div class="a" style="left:621px;top:342px;width:44px;height:18px;background:linear-gradient(#e6e6e6 0,#cfcfcf 45%,#a8a8a8 70%,#888 100%)"></div>
<div class="a" style="left:666px;top:342px;width:174px;height:18px;background:#ebebed"></div>
<div class="a" style="left:841px;top:342px;width:99px;height:18px;background:#ebebed"></div>
<div class="a" style="left:941px;top:342px;width:69px;height:18px;background:#ebebed"></div>
<div class="a" style="left:1011px;top:342px;width:69px;height:18px;background:#ebebed"></div>
<div class="a" style="left:1081px;top:342px;width:199px;height:18px;background:#ebebed"></div>
<div class="t nr" style="left:625px;top:345px">EM 3</div>
<div class="a" style="left:621px;top:361px;width:44px;height:18px;background:linear-gradient(#e6e6e6 0,#cfcfcf 45%,#a8a8a8 70%,#888 100%)"></div>
<div class="a" style="left:666px;top:361px;width:174px;height:18px;background:#ebebed"></div>
<div class="a" style="left:841px;top:361px;width:99px;height:18px;background:#ebebed"></div>
<div class="a" style="left:941px;top:361px;width:69px;height:18px;background:#ebebed"></div>
<div class="a" style="left:1011px;top:361px;width:69px;height:18px;background:#ebebed"></div>
<div class="a" style="left:1081px;top:361px;width:199px;height:18px;background:#ebebed"></div>
<div class="t nr" style="left:625px;top:364px">EM 4</div>
<div class="a" style="left:621px;top:380px;width:44px;height:18px;background:linear-gradient(#e6e6e6 0,#cfcfcf 45%,#a8a8a8 70%,#888 100%)"></div>
<div class="a" style="left:666px;top:380px;width:174px;height:18px;background:#ebebed"></div>
<div class="a" style="left:841px;top:380px;width:99px;height:18px;background:#ebebed"></div>
<div class="a" style="left:941px;top:380px;width:69px;height:18px;background:#ebebed"></div>
<div class="a" style="left:1011px;top:380px;width:69px;height:18px;background:#ebebed"></div>
<div class="a" style="left:1081px;top:380px;width:199px;height:18px;background:#ebebed"></div>
<div class="t nr" style="left:625px;top:383px">EM 5</div>
<style>.nr{font-size:12.500px;transform:scaleX(.875);transform-origin:0 50%;font-family:"Liberation Sans","Noto Sans CJK SC",sans-serif}.dl{position:absolute;white-space:nowrap;line-height:1;font-size:12px}.sunk{position:absolute;background:#fff;border:1px solid;border-color:#828282 #e3e3e3 #e3e3e3 #828282;box-shadow:inset 1px 1px 0 #696969}</style>
<div class="a" style="left:620px;top:408px;width:681px;height:1px;background:#a0a0a0"></div>
<div class="a" style="left:620px;top:409px;width:681px;height:1px;background:#fff"></div>
<div class="sunk" style="left:621px;top:415px;width:149px;height:421px"></div>
<div class="a" style="left:631px;top:449px;width:1px;height:25px;background-image:linear-gradient(#8a8a8a 50%,transparent 50%);background-size:1px 2px"></div>
<div class="a" style="left:641px;top:418px;width:28px;height:16px;background:#ececec"></div>
<div class="a" style="left:625px;top:421px;width:12px;height:12px;border:1px solid #9a9a9a;background:#e2e2e2"></div>
<div class="a" style="left:627px;top:423px;width:8px;height:8px;border:1px solid #34b81c;background:linear-gradient(135deg,#d2fab4 0,#8cf066 50%,#52e630 100%)"></div>
<svg style="left:625px;top:421px" width="12" height="12" viewBox="0 0 12 12"><path d="M3 5.500l2 2.500 4-5" stroke="#0a6a0a" stroke-width="1.600" fill="none"/></svg>
<div class="dl" style="left:644px;top:421px">通信</div>
<div class="a" style="left:625px;top:437px;width:12px;height:12px;border:1px solid #9a9a9a;background:#e2e2e2"></div>
<div class="a" style="left:627px;top:439px;width:8px;height:8px;border:1px solid #34b81c;background:linear-gradient(135deg,#d2fab4 0,#8cf066 50%,#52e630 100%)"></div>
<div class="dl" style="left:644px;top:437px">数字量输入</div>
<div class="a" style="left:632px;top:458px;width:12px;height:1px;background-image:linear-gradient(90deg,#8a8a8a 50%,transparent 50%);background-size:2px 1px"></div>
<div class="a" style="left:645px;top:453px;width:12px;height:12px;border:1px solid #9a9a9a;background:#e2e2e2"></div>
<div class="a" style="left:647px;top:455px;width:8px;height:8px;border:1px solid #34b81c;background:linear-gradient(135deg,#d2fab4 0,#8cf066 50%,#52e630 100%)"></div>
<div class="dl" style="left:662px;top:454px;font-size:11px;font-family:'DejaVu Sans','Liberation Sans',sans-serif;letter-spacing:-.2px">I0.0 - I0.7</div>
<div class="a" style="left:632px;top:474px;width:12px;height:1px;background-image:linear-gradient(90deg,#8a8a8a 50%,transparent 50%);background-size:2px 1px"></div>
<div class="a" style="left:645px;top:469px;width:12px;height:12px;border:1px solid #9a9a9a;background:#e2e2e2"></div>
<div class="a" style="left:647px;top:471px;width:8px;height:8px;border:1px solid #34b81c;background:linear-gradient(135deg,#d2fab4 0,#8cf066 50%,#52e630 100%)"></div>
<div class="dl" style="left:662px;top:470px;font-size:11px;font-family:'DejaVu Sans','Liberation Sans',sans-serif;letter-spacing:-.2px">I1.0 - I1.7</div>
<div class="a" style="left:625px;top:485px;width:12px;height:12px;border:1px solid #9a9a9a;background:#e2e2e2"></div>
<div class="a" style="left:627px;top:487px;width:8px;height:8px;border:1px solid #34b81c;background:linear-gradient(135deg,#d2fab4 0,#8cf066 50%,#52e630 100%)"></div>
<div class="dl" style="left:644px;top:485px">数字量输出</div>
<div class="a" style="left:625px;top:501px;width:12px;height:12px;border:1px solid #9a9a9a;background:#e2e2e2"></div>
<div class="a" style="left:627px;top:503px;width:8px;height:8px;border:1px solid #34b81c;background:linear-gradient(135deg,#d2fab4 0,#8cf066 50%,#52e630 100%)"></div>
<div class="dl" style="left:644px;top:501px">保持范围</div>
<div class="a" style="left:625px;top:517px;width:12px;height:12px;border:1px solid #9a9a9a;background:#e2e2e2"></div>
<div class="a" style="left:627px;top:519px;width:8px;height:8px;border:1px solid #34b81c;background:linear-gradient(135deg,#d2fab4 0,#8cf066 50%,#52e630 100%)"></div>
<div class="dl" style="left:644px;top:517px">安全</div>
<div class="a" style="left:625px;top:533px;width:12px;height:12px;border:1px solid #9a9a9a;background:#e2e2e2"></div>
<div class="a" style="left:627px;top:535px;width:8px;height:8px;border:1px solid #34b81c;background:linear-gradient(135deg,#d2fab4 0,#8cf066 50%,#52e630 100%)"></div>
<div class="dl" style="left:644px;top:533px">启动</div>
<div class="dl" style="left:780px;top:416px;font-weight:bold;letter-spacing:.7px">以太网端口</div>
<div class="a" style="left:798px;top:442px;width:13px;height:13px;background:#fff;border:1px solid;border-color:#828282 #e3e3e3 #e3e3e3 #828282;box-shadow:inset 1px 1px 0 #696969"></div>
<svg style="left:798px;top:442px" width="13" height="13" viewBox="0 0 13 13"><path d="M3.500 6l2 2.500 4-5" stroke="#000" stroke-width="1.700" fill="none"/></svg>
<div class="dl" style="left:816px;top:444px"><span style="font-size:11px">IP</span> 地址数据固定为下面的值，不能通过其它方式更改</div>
<div class="dl" style="left:823px;width:100px;text-align:right;letter-spacing:.35px;top:474px"><span style="font-size:11px">IP</span> 地址:</div>
<div class="sunk" style="left:936px;top:469px;width:150px;height:20px"></div>
<div class="dl" style="left:941px;width:30px;text-align:center;top:474px;font-size:11px">192</div>
<div class="dl" style="left:977px;width:30px;text-align:center;top:474px;font-size:11px">168</div>
<div class="dl" style="left:1013px;width:30px;text-align:center;top:474px;font-size:11px">2</div>
<div class="dl" style="left:1049px;width:30px;text-align:center;top:474px;font-size:11px">113</div>
<div class="dl" style="left:973px;top:474px;font-size:11px">.</div>
<div class="dl" style="left:1009px;top:474px;font-size:11px">.</div>
<div class="dl" style="left:1045px;top:474px;font-size:11px">.</div>
<div class="dl" style="left:823px;width:100px;text-align:right;letter-spacing:.35px;top:505px">子网掩码:</div>
<div class="sunk" style="left:936px;top:500px;width:150px;height:20px"></div>
<div class="dl" style="left:941px;width:30px;text-align:center;top:505px;font-size:11px">255</div>
<div class="dl" style="left:977px;width:30px;text-align:center;top:505px;font-size:11px">255</div>
<div class="dl" style="left:1013px;width:30px;text-align:center;top:505px;font-size:11px">255</div>
<div class="dl" style="left:1049px;width:30px;text-align:center;top:505px;font-size:11px">0</div>
<div class="dl" style="left:973px;top:505px;font-size:11px">.</div>
<div class="dl" style="left:1009px;top:505px;font-size:11px">.</div>
<div class="dl" style="left:1045px;top:505px;font-size:11px">.</div>
<div class="dl" style="left:823px;width:100px;text-align:right;letter-spacing:.35px;top:535px">默认网关:</div>
<div class="sunk" style="left:936px;top:530px;width:150px;height:20px"></div>
<div class="dl" style="left:941px;width:30px;text-align:center;top:535px;font-size:11px">0</div>
<div class="dl" style="left:977px;width:30px;text-align:center;top:535px;font-size:11px">0</div>
<div class="dl" style="left:1013px;width:30px;text-align:center;top:535px;font-size:11px">0</div>
<div class="dl" style="left:1049px;width:30px;text-align:center;top:535px;font-size:11px">0</div>
<div class="dl" style="left:973px;top:535px;font-size:11px">.</div>
<div class="dl" style="left:1009px;top:535px;font-size:11px">.</div>
<div class="dl" style="left:1045px;top:535px;font-size:11px">.</div>
<div class="dl" style="left:823px;width:100px;text-align:right;letter-spacing:.35px;top:566px">站名称:</div>
<div class="sunk" style="left:936px;top:561px;width:354px;height:20px"></div>
<div class="dl" style="left:780px;top:595px;font-weight:bold;letter-spacing:.7px">背景时间</div>
<div class="dl" style="left:803px;top:619px">选择通信背景时间 <span style="font-size:11px">(5 - 50%)</span></div>
<div class="sunk" style="left:803px;top:634px;width:53px;height:20px"></div>
<div class="a" style="left:838px;top:636px;width:16px;height:16px;background:#f0f0f0;border:1px solid;border-color:#fff #696969 #696969 #fff;box-shadow:inset -1px -1px 0 #a0a0a0"></div>
<div class="dd" style="left:842px;top:642px;border-top-color:#000;border-left-width:4px;border-right-width:4px;border-top-width:4px"></div>
<div class="dl" style="left:807px;top:640px;font-size:11px">10</div>
<div class="dl" style="left:780px;top:679px;font-weight:bold;letter-spacing:.7px"><span style="font-family:'Liberation Serif',serif;font-size:12.500px;letter-spacing:.1px;margin-right:2px">RS485</span> 端口</div>
<div class="dl" style="left:803px;top:705px;word-spacing:-1.600px">通过 <span style="font-size:11px">RS485</span> 设置可调整 <span style="font-size:11px">PLC</span> 和 <span style="font-size:11px">HMI</span> 设备用来通信的通信参数</div>
<div class="dl" style="left:823px;width:100px;text-align:right;letter-spacing:.35px;top:741px">地址:</div>
<div class="sunk" style="left:936px;top:735px;width:59px;height:20px"></div>
<div class="a" style="left:977px;top:737px;width:16px;height:16px;background:#f0f0f0;border:1px solid;border-color:#fff #696969 #696969 #fff;box-shadow:inset -1px -1px 0 #a0a0a0"></div>
<div class="dd" style="left:981px;top:743px;border-top-color:#000;border-left-width:4px;border-right-width:4px;border-top-width:4px"></div>
<div class="dl" style="left:940px;top:741px;font-size:11px">2</div>
<div class="dl" style="left:823px;width:100px;text-align:right;letter-spacing:.35px;top:766px">波特率:</div>
<div class="sunk" style="left:936px;top:761px;width:89px;height:20px"></div>
<div class="a" style="left:1007px;top:763px;width:16px;height:16px;background:#f0f0f0;border:1px solid;border-color:#fff #696969 #696969 #fff;box-shadow:inset -1px -1px 0 #a0a0a0"></div>
<div class="dd" style="left:1011px;top:769px;border-top-color:#000;border-left-width:4px;border-right-width:4px;border-top-width:4px"></div>
<div class="dl" style="left:940px;top:767px;font-size:11px">9.6 Kbps</div>
<div class="a" style="left:780px;top:793px;width:510px;height:1px;background:#a0a0a0"></div>
<div class="a" style="left:780px;top:794px;width:510px;height:1px;background:#fff"></div>
<div class="a" style="left:1105px;top:804px;width:90px;height:23px;background:#f0f0f0;border:1px solid;border-color:#fff #696969 #696969 #fff;box-shadow:inset -1px -1px 0 #a0a0a0"></div>
<div class="dl" style="left:1105px;width:90px;text-align:center;top:811px">确定</div>
<div class="a" style="left:1201px;top:804px;width:90px;height:23px;background:#f0f0f0;border:1px solid;border-color:#fff #696969 #696969 #fff;box-shadow:inset -1px -1px 0 #a0a0a0"></div>
<div class="dl" style="left:1201px;width:90px;text-align:center;top:811px">取消</div>
<!-- ===== status bar ===== -->
<div class="a" style="left:0;top:1016px;width:1920px;height:24px;background:linear-gradient(#43474f 0,#3c3f47 4px,#333435 9px,#2f2f2f 100%)"></div>
<div class="t" style="left:9px;top:1022px;font-size:12.500px;color:#fff">项目树</div>
<div class="a" style="left:231px;top:1018px;width:1px;height:19px;background:#5d5d5d"></div>
<div class="a" style="left:270px;top:1018px;width:1px;height:19px;background:#5d5d5d"></div>
<div class="a" style="left:523px;top:1018px;width:1px;height:19px;background:#555"></div>
<div class="a" style="left:572px;top:1018px;width:1px;height:19px;background:#555"></div>
<div class="t" style="left:241px;top:1023px;font-size:10.500px;color:#fff">INS</div>
<div class="a" style="left:281px;top:1021px;width:14px;height:14px;border-radius:50%;background:#9b9b9b"></div>
<div class="t" style="left:314px;top:1022px;font-size:12.500px;color:#fff">未连接</div>
<!-- zoom box -->
<div class="a" style="left:1731px;top:1016px;width:189px;height:24px;background:linear-gradient(#c4c4c4 0,#a9a9a9 45%,#8f9294 75%,#80868c 100%);border-left:2px solid #222;box-shadow:inset 1px 1px 0 #e0e0e0"></div>
<div class="t" style="left:1748px;top:1023px;font-size:10.500px;color:#777">100%</div>
<svg style="left:1785px;top:1019px" width="135" height="18" viewBox="0 0 135 18"><defs><linearGradient id="zb" x1="0" y1="0" x2="0" y2="1"><stop offset="0" stop-color="#fff"/><stop offset=".5" stop-color="#d8d8d8"/><stop offset="1" stop-color="#f4f4f4"/></linearGradient></defs>
<circle cx="8.500" cy="9" r="7" fill="url(#zb)" stroke="#666" stroke-width="1"/><path d="M5 9h7" stroke="#444" stroke-width="2"/>
<path d="M24 9.500h86" stroke="#fff"/><path d="M24 10.500h86" stroke="#8a8a8a" stroke-opacity=".6"/>
<path d="M63.500 2.500h7v8l-3.500 4-3.500-4z" fill="#eee" stroke="#444"/><path d="M67 5v4" stroke="#555"/>
<circle cx="124.500" cy="9" r="7" fill="url(#zb)" stroke="#666" stroke-width="1"/><path d="M121 9h7M124.500 5.500v7" stroke="#444" stroke-width="2"/>
</svg>
<!-- taskbar strip -->
<div class="a" style="left:0;top:1040px;width:1920px;height:8px;background:linear-gradient(90deg,#383c31 0,#3c4443 150px,#404242 300px,#4a4040 392px,#4c3a38 445px,#55352d 540px,#53362c 800px,#4b352d 1000px,#3e3a40 1150px,#33353f 1300px,#37383d 1500px,#2f2f33 1700px,#2b2b2f 1920px)"></div>
<div class="a" style="left:393px;top:1040px;width:48px;height:8px;background:#6b6161"></div>
<div class="a" style="left:1915px;top:1040px;width:1px;height:8px;background:#777"></div>
<div class="t" style="left:1815px;top:1045px;font-size:11px;color:#eee">10:00</div>
</body>
</html>
